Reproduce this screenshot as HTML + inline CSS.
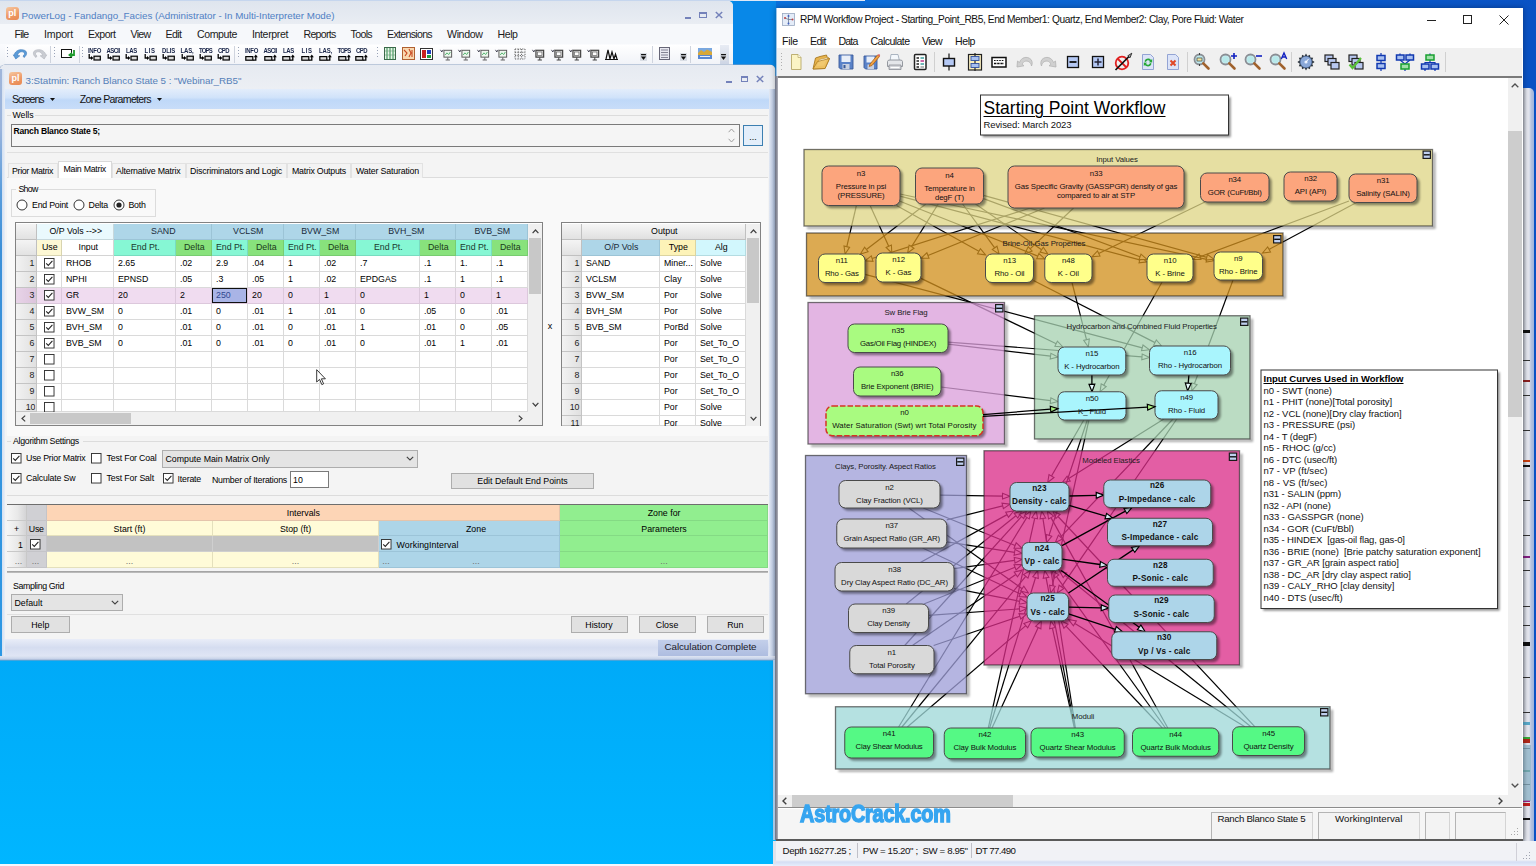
<!DOCTYPE html><html><head><meta charset="utf-8"><title>PowerLog</title><style>
html,body{margin:0;padding:0}
body{width:1536px;height:866px;overflow:hidden;position:relative;font-family:"Liberation Sans",sans-serif;font-size:8.8px;color:#000;
 background:#0a7be0;}
div,span,svg{position:absolute;}
span{white-space:pre;display:block}
svg{overflow:visible}
.abs{position:absolute}
</style></head><body><div style="left:0px;top:0px;width:1536px;height:866px;background:linear-gradient(90deg,#00aef8 0%,#00aaf4 40%,#0690ea 49%,#0a6cd4 60%,#0a58c8 100%);"></div><div style="left:0px;top:655px;width:776px;height:211px;background:linear-gradient(180deg,#00aaf8,#00b6ff);"></div><div style="left:733px;top:0px;width:43px;height:65px;background:#0888e8;"></div><div style="left:1523px;top:0px;width:13px;height:866px;background:#0a52c4;"></div><div style="left:776px;top:0px;width:760px;height:8px;background:linear-gradient(90deg,#0a70dc,#0a52c4);"></div><div style="left:1522px;top:87.5px;width:12px;height:753px;background:linear-gradient(90deg,#8a8e98 0,#c8ccd6 3px,#e4e6ee 5px,#e4e6ee 7px,#b8c4de 9px,#9fb4dc 12px);border-radius:0 5px 0 0;"></div><div style="left:1522px;top:330px;width:8px;height:3px;background:#111;"></div><div style="left:1522px;top:360px;width:8px;height:1px;background:#333;"></div><div style="left:1522px;top:380px;width:8px;height:1.5px;background:#8a2020;"></div><div style="left:1522px;top:395px;width:8px;height:1px;background:#333;"></div><div style="left:1522px;top:430px;width:8px;height:1px;background:#333;"></div><div style="left:1522px;top:460px;width:8px;height:2px;background:#c84010;"></div><div style="left:1522px;top:465px;width:8px;height:1.5px;background:#111;"></div><div style="left:1522px;top:500px;width:8px;height:1px;background:#333;"></div><div style="left:1522px;top:535px;width:8px;height:1px;background:#333;"></div><div style="left:1522px;top:556px;width:8px;height:1.5px;background:#802080;"></div><div style="left:1522px;top:570px;width:8px;height:1px;background:#333;"></div><div style="left:1522px;top:606px;width:8px;height:1px;background:#333;"></div><div style="left:1522px;top:625px;width:8px;height:1px;background:#333;"></div><div style="left:1522px;top:642px;width:8px;height:4px;background:#111;"></div><div style="left:1522px;top:677px;width:8px;height:1px;background:#333;"></div><div style="left:1522px;top:712px;width:8px;height:1px;background:#333;"></div><div style="left:1522px;top:722px;width:8px;height:3px;background:#58a8c8;"></div><div style="left:1522px;top:737px;width:8px;height:1.5px;background:#38a838;"></div><div style="left:1522px;top:739px;width:8px;height:4px;background:#b02818;"></div><div style="left:1522px;top:748px;width:8px;height:1px;background:#333;"></div><div style="left:1522px;top:770px;width:8px;height:1.5px;background:#208060;"></div><div style="left:1522px;top:784px;width:8px;height:1px;background:#333;"></div><div style="left:1522px;top:800px;width:8px;height:2px;background:#a02080;"></div><div style="left:1522px;top:803px;width:8px;height:3px;background:#c02020;"></div><div style="left:1522px;top:818px;width:8px;height:1.5px;background:#111;"></div><div style="left:1523px;top:745px;width:8px;height:56px;background:#8cb4c8;opacity:0.75"></div><div style="left:0px;top:863.7px;width:773px;height:2.3px;background:#f4f7fc;"></div><div style="left:0px;top:60px;width:733px;height:12px;background:#e8ecf3;"></div><div style="left:0px;top:0px;width:672px;height:1px;background:#c8ccd6;"></div><div style="left:708px;top:0px;width:157px;height:1px;background:#dfe8f6;"></div><div style="left:0;top:0;width:733px;height:1px;background:#c6d6ee"></div><div id="pl" class="abs" style="left:0;top:1px;width:733px;height:64px;background:#f4f6fa;border-radius:0 5px 0 0;overflow:hidden"><div style="left:0px;top:0px;width:733px;height:23px;background:linear-gradient(#dfe5ee,#e9edf3);"></div><div style="left:6px;top:6px;width:12.5px;height:12.5px;border-radius:3px;background:linear-gradient(160deg,#f6c8a0 0%,#ee9a68 55%,#e88850 100%);"></div><span style="left:8.3px;top:5.8px;font-size:9px;line-height:12px;color:#fff;font-weight:bold;">pl</span><span style="left:21.5px;top:7.5px;font-size:9.8px;line-height:13px;letter-spacing:-0.018px;color:#4f7fc4;">PowerLog - Fandango_Facies (Administrator - In Multi-Interpreter Mode)</span><div style="left:684.5px;top:16.0px;width:6px;height:1.6px;background:#7482ba;"></div><div style="left:699.0px;top:10.5px;width:7.5px;height:6.5px;border:1px solid #7482ba;border-top:2.2px solid #7482ba;box-sizing:border-box;"></div><svg style="left:713.5px;top:8.5px" width="10" height="10" viewBox="0 0 10 10"><path d="M1.8 2 L8.2 8 M8.2 2 L1.8 8" stroke="#7482ba" stroke-width="1.5" fill="none"/></svg><div style="left:0px;top:23px;width:733px;height:20px;background:#f6f8fb;"></div><span style="left:14.5px;top:26.3px;font-size:10.6px;line-height:14px;letter-spacing:-0.770px;color:#1a1a1a;">File</span><span style="left:44.0px;top:26.3px;font-size:10.6px;line-height:14px;letter-spacing:-0.174px;color:#1a1a1a;">Import</span><span style="left:88.0px;top:26.3px;font-size:10.6px;line-height:14px;letter-spacing:-0.523px;color:#1a1a1a;">Export</span><span style="left:130.5px;top:26.3px;font-size:10.6px;line-height:14px;letter-spacing:-0.696px;color:#1a1a1a;">View</span><span style="left:165.5px;top:26.3px;font-size:10.6px;line-height:14px;letter-spacing:-0.566px;color:#1a1a1a;">Edit</span><span style="left:197.0px;top:26.3px;font-size:10.6px;line-height:14px;letter-spacing:-0.430px;color:#1a1a1a;">Compute</span><span style="left:252.0px;top:26.3px;font-size:10.6px;line-height:14px;letter-spacing:-0.386px;color:#1a1a1a;">Interpret</span><span style="left:303.5px;top:26.3px;font-size:10.6px;line-height:14px;letter-spacing:-0.731px;color:#1a1a1a;">Reports</span><span style="left:350.5px;top:26.3px;font-size:10.6px;line-height:14px;letter-spacing:-0.649px;color:#1a1a1a;">Tools</span><span style="left:387.0px;top:26.3px;font-size:10.6px;line-height:14px;letter-spacing:-0.685px;color:#1a1a1a;">Extensions</span><span style="left:447.0px;top:26.3px;font-size:10.6px;line-height:14px;letter-spacing:-0.367px;color:#1a1a1a;">Window</span><span style="left:497.5px;top:26.3px;font-size:10.6px;line-height:14px;letter-spacing:-0.450px;color:#1a1a1a;">Help</span><div style="left:0px;top:43px;width:733px;height:21px;background:linear-gradient(#fbfcfe,#eef1f6);"></div><div style="left:5px;top:44px;width:724px;height:19px;background:linear-gradient(#ffffff,#f1f3f8);border-radius:3px;"></div><div style="left:720px;top:44px;width:9px;height:19px;background:linear-gradient(#e8ecf4,#cdd5e4);"></div><div style="left:7px;top:46px;width:1.2px;height:1.2px;background:#9aa4b8;"></div><div style="left:7px;top:49px;width:1.2px;height:1.2px;background:#9aa4b8;"></div><div style="left:7px;top:52px;width:1.2px;height:1.2px;background:#9aa4b8;"></div><div style="left:7px;top:55px;width:1.2px;height:1.2px;background:#9aa4b8;"></div><svg style="left:13px;top:46px" width="15" height="13" viewBox="0 0 15 13"><path d="M1 8.5 C2 3 8 1.5 12 3.5 C14.5 5 14 8.5 11 10.5 L10 9 C12 7.5 12 6 10.5 5.2 C8 4 5 5.5 4.5 8.5 L6.8 8.8 L2.8 12 L0.2 7.8Z" fill="#5b9bd8" stroke="#3a78b8" stroke-width="0.6"/></svg><svg style="left:32px;top:46px" width="15" height="13" viewBox="0 0 15 13"><path d="M14 8.5 C13 3 7 1.5 3 3.5 C0.5 5 1 8.5 4 10.5 L5 9 C3 7.5 3 6 4.5 5.2 C7 4 10 5.5 10.5 8.5 L8.2 8.8 L12.2 12 L14.8 7.8Z" fill="#c9ccd2" stroke="#b0b4bc" stroke-width="0.6"/></svg><div style="left:53.5px;top:46px;width:1.2px;height:1.2px;background:#9aa4b8;"></div><div style="left:53.5px;top:49px;width:1.2px;height:1.2px;background:#9aa4b8;"></div><div style="left:53.5px;top:52px;width:1.2px;height:1.2px;background:#9aa4b8;"></div><div style="left:53.5px;top:55px;width:1.2px;height:1.2px;background:#9aa4b8;"></div><div style="left:60.5px;top:47.5px;width:11.5px;height:9px;border:1.6px solid #111;box-sizing:border-box;background:#fff"></div><svg style="left:68px;top:49px" width="8" height="8" viewBox="0 0 8 8"><path d="M6 0 V5 H2.5 M4 3 L1.5 5 L4 7" fill="none" stroke="#1c9a2c" stroke-width="1.8"/></svg><div style="left:50px;top:45px;width:1px;height:17px;background:#cfd4de;"></div><div style="left:78.5px;top:45px;width:1px;height:17px;background:#cfd4de;"></div><div style="left:82px;top:46px;width:1.2px;height:1.2px;background:#9aa4b8;"></div><div style="left:82px;top:49px;width:1.2px;height:1.2px;background:#9aa4b8;"></div><div style="left:82px;top:52px;width:1.2px;height:1.2px;background:#9aa4b8;"></div><div style="left:82px;top:55px;width:1.2px;height:1.2px;background:#9aa4b8;"></div><span style="left:88.0px;top:45.6px;font-size:6px;line-height:8px;letter-spacing:-0.333px;color:#182448;font-weight:bold;transform:scaleY(1.15);">INFO</span><svg style="left:88.0px;top:53.0px" width="13" height="8" viewBox="0 0 13 8"><path d="M1.2 0 V4 H4" fill="none" stroke="#000" stroke-width="1.3"/><path d="M3 2 L5.4 4 L3 6Z" fill="#000"/><rect x="6" y="2.2" width="6.3" height="3.8" fill="#d8d8d8" stroke="#000" stroke-width="1.2"/></svg><span style="left:106.5px;top:45.6px;font-size:6px;line-height:8px;letter-spacing:-0.600px;color:#182448;font-weight:bold;transform:scaleY(1.15);">ASCII</span><svg style="left:106.5px;top:53.0px" width="13" height="8" viewBox="0 0 13 8"><path d="M1.2 0 V4 H4" fill="none" stroke="#000" stroke-width="1.3"/><path d="M3 2 L5.4 4 L3 6Z" fill="#000"/><rect x="6" y="2.2" width="6.3" height="3.8" fill="#d8d8d8" stroke="#000" stroke-width="1.2"/></svg><span style="left:126.1px;top:45.6px;font-size:6px;line-height:8px;letter-spacing:-0.400px;color:#182448;font-weight:bold;transform:scaleY(1.15);">LAS</span><svg style="left:125.0px;top:53.0px" width="13" height="8" viewBox="0 0 13 8"><path d="M1.2 0 V4 H4" fill="none" stroke="#000" stroke-width="1.3"/><path d="M3 2 L5.4 4 L3 6Z" fill="#000"/><rect x="6" y="2.2" width="6.3" height="3.8" fill="#d8d8d8" stroke="#000" stroke-width="1.2"/></svg><span style="left:144.6px;top:45.6px;font-size:6px;line-height:8px;letter-spacing:0.489px;color:#182448;font-weight:bold;transform:scaleY(1.15);">LIS</span><svg style="left:143.5px;top:53.0px" width="13" height="8" viewBox="0 0 13 8"><path d="M1.2 0 V4 H4" fill="none" stroke="#000" stroke-width="1.3"/><path d="M3 2 L5.4 4 L3 6Z" fill="#000"/><rect x="6" y="2.2" width="6.3" height="3.8" fill="#d8d8d8" stroke="#000" stroke-width="1.2"/></svg><span style="left:162.0px;top:45.6px;font-size:6px;line-height:8px;letter-spacing:-0.167px;color:#182448;font-weight:bold;transform:scaleY(1.15);">DLIS</span><svg style="left:162.0px;top:53.0px" width="13" height="8" viewBox="0 0 13 8"><path d="M1.2 0 V4 H4" fill="none" stroke="#000" stroke-width="1.3"/><path d="M3 2 L5.4 4 L3 6Z" fill="#000"/><rect x="6" y="2.2" width="6.3" height="3.8" fill="#d8d8d8" stroke="#000" stroke-width="1.2"/></svg><span style="left:180.5px;top:45.6px;font-size:6px;line-height:8px;letter-spacing:-0.167px;color:#182448;font-weight:bold;transform:scaleY(1.15);">LAS,</span><svg style="left:180.5px;top:53.0px" width="13" height="8" viewBox="0 0 13 8"><path d="M1.2 0 V4 H4" fill="none" stroke="#000" stroke-width="1.3"/><path d="M3 2 L5.4 4 L3 6Z" fill="#000"/><rect x="6" y="2.2" width="6.3" height="3.8" fill="#d8d8d8" stroke="#000" stroke-width="1.2"/></svg><span style="left:199.0px;top:45.6px;font-size:6px;line-height:8px;letter-spacing:-0.807px;color:#182448;font-weight:bold;transform:scaleY(1.15);">TOPS</span><svg style="left:199.0px;top:53.0px" width="13" height="8" viewBox="0 0 13 8"><path d="M1.2 0 V4 H4" fill="none" stroke="#000" stroke-width="1.3"/><path d="M3 2 L5.4 4 L3 6Z" fill="#000"/><rect x="6" y="2.2" width="6.3" height="3.8" fill="#d8d8d8" stroke="#000" stroke-width="1.2"/></svg><span style="left:218.1px;top:45.6px;font-size:6px;line-height:8px;letter-spacing:-0.623px;color:#182448;font-weight:bold;transform:scaleY(1.15);">CPD</span><svg style="left:217.0px;top:53.0px" width="13" height="8" viewBox="0 0 13 8"><path d="M1.2 0 V4 H4" fill="none" stroke="#000" stroke-width="1.3"/><path d="M3 2 L5.4 4 L3 6Z" fill="#000"/><rect x="6" y="2.2" width="6.3" height="3.8" fill="#d8d8d8" stroke="#000" stroke-width="1.2"/></svg><div style="left:234px;top:45px;width:1px;height:17px;background:#cfd4de;"></div><div style="left:238px;top:46px;width:1.2px;height:1.2px;background:#9aa4b8;"></div><div style="left:238px;top:49px;width:1.2px;height:1.2px;background:#9aa4b8;"></div><div style="left:238px;top:52px;width:1.2px;height:1.2px;background:#9aa4b8;"></div><div style="left:238px;top:55px;width:1.2px;height:1.2px;background:#9aa4b8;"></div><span style="left:245.0px;top:45.6px;font-size:6px;line-height:8px;letter-spacing:-0.333px;color:#182448;font-weight:bold;transform:scaleY(1.15);">INFO</span><svg style="left:245.0px;top:53.0px" width="13" height="8" viewBox="0 0 13 8"><rect x="0.8" y="2.6" width="7" height="3.6" fill="#d8d8d8" stroke="#000" stroke-width="1.2"/><path d="M8 6.2 H10.8 V2.5" fill="none" stroke="#000" stroke-width="1.3"/><path d="M8.8 3.2 L10.8 0.4 L12.8 3.2Z" fill="#000"/></svg><span style="left:263.5px;top:45.6px;font-size:6px;line-height:8px;letter-spacing:-0.600px;color:#182448;font-weight:bold;transform:scaleY(1.15);">ASCII</span><svg style="left:263.5px;top:53.0px" width="13" height="8" viewBox="0 0 13 8"><rect x="0.8" y="2.6" width="7" height="3.6" fill="#d8d8d8" stroke="#000" stroke-width="1.2"/><path d="M8 6.2 H10.8 V2.5" fill="none" stroke="#000" stroke-width="1.3"/><path d="M8.8 3.2 L10.8 0.4 L12.8 3.2Z" fill="#000"/></svg><span style="left:283.1px;top:45.6px;font-size:6px;line-height:8px;letter-spacing:-0.400px;color:#182448;font-weight:bold;transform:scaleY(1.15);">LAS</span><svg style="left:282.0px;top:53.0px" width="13" height="8" viewBox="0 0 13 8"><rect x="0.8" y="2.6" width="7" height="3.6" fill="#d8d8d8" stroke="#000" stroke-width="1.2"/><path d="M8 6.2 H10.8 V2.5" fill="none" stroke="#000" stroke-width="1.3"/><path d="M8.8 3.2 L10.8 0.4 L12.8 3.2Z" fill="#000"/></svg><span style="left:301.6px;top:45.6px;font-size:6px;line-height:8px;letter-spacing:0.489px;color:#182448;font-weight:bold;transform:scaleY(1.15);">LIS</span><svg style="left:300.5px;top:53.0px" width="13" height="8" viewBox="0 0 13 8"><rect x="0.8" y="2.6" width="7" height="3.6" fill="#d8d8d8" stroke="#000" stroke-width="1.2"/><path d="M8 6.2 H10.8 V2.5" fill="none" stroke="#000" stroke-width="1.3"/><path d="M8.8 3.2 L10.8 0.4 L12.8 3.2Z" fill="#000"/></svg><span style="left:319.0px;top:45.6px;font-size:6px;line-height:8px;letter-spacing:-0.167px;color:#182448;font-weight:bold;transform:scaleY(1.15);">LAS,</span><svg style="left:319.0px;top:53.0px" width="13" height="8" viewBox="0 0 13 8"><rect x="0.8" y="2.6" width="7" height="3.6" fill="#d8d8d8" stroke="#000" stroke-width="1.2"/><path d="M8 6.2 H10.8 V2.5" fill="none" stroke="#000" stroke-width="1.3"/><path d="M8.8 3.2 L10.8 0.4 L12.8 3.2Z" fill="#000"/></svg><span style="left:337.5px;top:45.6px;font-size:6px;line-height:8px;letter-spacing:-0.807px;color:#182448;font-weight:bold;transform:scaleY(1.15);">TOPS</span><svg style="left:337.5px;top:53.0px" width="13" height="8" viewBox="0 0 13 8"><rect x="0.8" y="2.6" width="7" height="3.6" fill="#d8d8d8" stroke="#000" stroke-width="1.2"/><path d="M8 6.2 H10.8 V2.5" fill="none" stroke="#000" stroke-width="1.3"/><path d="M8.8 3.2 L10.8 0.4 L12.8 3.2Z" fill="#000"/></svg><span style="left:356.1px;top:45.6px;font-size:6px;line-height:8px;letter-spacing:-0.623px;color:#182448;font-weight:bold;transform:scaleY(1.15);">CPD</span><svg style="left:355.0px;top:53.0px" width="13" height="8" viewBox="0 0 13 8"><rect x="0.8" y="2.6" width="7" height="3.6" fill="#d8d8d8" stroke="#000" stroke-width="1.2"/><path d="M8 6.2 H10.8 V2.5" fill="none" stroke="#000" stroke-width="1.3"/><path d="M8.8 3.2 L10.8 0.4 L12.8 3.2Z" fill="#000"/></svg><div style="left:376.5px;top:46px;width:1.2px;height:1.2px;background:#9aa4b8;"></div><div style="left:376.5px;top:49px;width:1.2px;height:1.2px;background:#9aa4b8;"></div><div style="left:376.5px;top:52px;width:1.2px;height:1.2px;background:#9aa4b8;"></div><div style="left:376.5px;top:55px;width:1.2px;height:1.2px;background:#9aa4b8;"></div><svg style="left:384px;top:46px" width="12" height="13" viewBox="0 0 12 13"><rect x="0.5" y="0.5" width="11" height="12" fill="#e8f4e8" stroke="#3a6a4a"/><path d="M3 1 V12 M6 1 V12 M9 1 V12" stroke="#2a8a4a" stroke-width="1"/><path d="M1 4 H11 M1 8 H11" stroke="#6a9a7a" stroke-width="0.6"/></svg><svg style="left:402px;top:46px" width="13" height="13" viewBox="0 0 13 13"><rect x="0.5" y="0.5" width="12" height="12" fill="#f8d8b0" stroke="#b06030"/><path d="M2 3 L5 6 L3 9 M7 2 L9 6 L7 10 M10 3 V10" stroke="#c84820" stroke-width="1.1" fill="none"/></svg><svg style="left:420px;top:47px" width="13" height="12" viewBox="0 0 13 12"><rect x="0.5" y="0.5" width="12" height="11" fill="#fff" stroke="#333"/><rect x="2" y="2" width="4" height="8" fill="#c82020"/><rect x="7" y="2" width="4" height="4" fill="#2040c0"/><rect x="7" y="7" width="4" height="3" fill="#20a040"/></svg><svg style="left:439.5px;top:47.5px" width="13" height="12" viewBox="0 0 15 14"><path d="M0.5 1 L2 3.5 L3.5 1" fill="none" stroke="#334" stroke-width="1"/><rect x="4.5" y="1.5" width="9" height="8" fill="#eef6ee" stroke="#555" stroke-width="1.1"/><path d="M6 7 L8 4.5 L10 6.5 L12 3.5" stroke="#3aaa5a" stroke-width="1" fill="none"/><path d="M9 10 V12.5 M6.5 12.8 H11.5" stroke="#555" stroke-width="1.1"/></svg><svg style="left:458.0px;top:47.5px" width="13" height="12" viewBox="0 0 15 14"><path d="M0.5 1 L2 3.5 L3.5 1" fill="none" stroke="#334" stroke-width="1"/><rect x="4.5" y="1.5" width="9" height="8" fill="#eef6ee" stroke="#555" stroke-width="1.1"/><path d="M6 7 L8 4.5 L10 6.5 L12 3.5" stroke="#3aaa5a" stroke-width="1" fill="none"/><path d="M9 10 V12.5 M6.5 12.8 H11.5" stroke="#555" stroke-width="1.1"/></svg><svg style="left:476.5px;top:47.5px" width="13" height="12" viewBox="0 0 15 14"><path d="M0.5 1 L2 3.5 L3.5 1" fill="none" stroke="#334" stroke-width="1"/><rect x="4.5" y="1.5" width="9" height="8" fill="#eef6ee" stroke="#555" stroke-width="1.1"/><path d="M6 7 L8 4.5 L10 6.5 L12 3.5" stroke="#3aaa5a" stroke-width="1" fill="none"/><path d="M9 10 V12.5 M6.5 12.8 H11.5" stroke="#555" stroke-width="1.1"/></svg><svg style="left:495.0px;top:47.5px" width="13" height="12" viewBox="0 0 15 14"><path d="M0.5 1 L2 3.5 L3.5 1" fill="none" stroke="#334" stroke-width="1"/><rect x="4.5" y="1.5" width="9" height="8" fill="#eef6ee" stroke="#555" stroke-width="1.1"/><path d="M6 7 L8 4.5 L10 6.5 L12 3.5" stroke="#3aaa5a" stroke-width="1" fill="none"/><path d="M9 10 V12.5 M6.5 12.8 H11.5" stroke="#555" stroke-width="1.1"/></svg><svg style="left:514px;top:47px" width="12" height="12" viewBox="0 0 12 12"><path d="M1 1 H11 M1 4.3 H11 M1 7.6 H11 M1 11 H11 M1 1 V11 M4.3 1 V11 M7.6 1 V11 M11 1 V11" stroke="#555" stroke-width="0.9" stroke-dasharray="1.2 1.2"/></svg><svg style="left:532.0px;top:47.5px" width="13" height="12" viewBox="0 0 15 14"><path d="M0.5 1 L2 3.5 L3.5 1" fill="none" stroke="#334" stroke-width="1"/><rect x="4.5" y="1.5" width="9" height="8" fill="#dcdcdc" stroke="#444" stroke-width="1.4"/><rect x="6.5" y="3.5" width="5" height="4" fill="#fff" stroke="#666" stroke-width="0.8"/><path d="M9 10 V12.5 M6.5 12.8 H11.5" stroke="#444" stroke-width="1.2"/></svg><svg style="left:550.5px;top:47.5px" width="13" height="12" viewBox="0 0 15 14"><path d="M0.5 1 L2 3.5 L3.5 1" fill="none" stroke="#334" stroke-width="1"/><rect x="4.5" y="1.5" width="9" height="8" fill="#dcdcdc" stroke="#444" stroke-width="1.4"/><rect x="6.5" y="3.5" width="5" height="4" fill="#fff" stroke="#666" stroke-width="0.8"/><path d="M9 10 V12.5 M6.5 12.8 H11.5" stroke="#444" stroke-width="1.2"/></svg><svg style="left:569.0px;top:47.5px" width="13" height="12" viewBox="0 0 15 14"><path d="M0.5 1 L2 3.5 L3.5 1" fill="none" stroke="#334" stroke-width="1"/><rect x="4.5" y="1.5" width="9" height="8" fill="#dcdcdc" stroke="#444" stroke-width="1.4"/><rect x="6.5" y="3.5" width="5" height="4" fill="#fff" stroke="#666" stroke-width="0.8"/><path d="M9 10 V12.5 M6.5 12.8 H11.5" stroke="#444" stroke-width="1.2"/></svg><svg style="left:587.0px;top:47.5px" width="13" height="12" viewBox="0 0 15 14"><path d="M0.5 1 L2 3.5 L3.5 1" fill="none" stroke="#334" stroke-width="1"/><rect x="4.5" y="1.5" width="9" height="8" fill="#dcdcdc" stroke="#444" stroke-width="1.4"/><rect x="6.5" y="3.5" width="5" height="4" fill="#fff" stroke="#666" stroke-width="0.8"/><path d="M9 10 V12.5 M6.5 12.8 H11.5" stroke="#444" stroke-width="1.2"/></svg><svg style="left:605px;top:47px" width="13" height="12" viewBox="0 0 13 12"><path d="M1 11 L3 2 L5 11 M5 11 L7 4 L9 11 M9 11 L10.5 6 L12 11" stroke="#111" stroke-width="1.2" fill="none"/><path d="M0 11.5 H13" stroke="#111" stroke-width="1"/></svg><svg style="left:640px;top:52px" width="7" height="8" viewBox="0 0 8 9"><rect x="0" y="0" width="8" height="9" fill="#d8dce4"/><path d="M1.2 1.8 H6.8" stroke="#111" stroke-width="1.2"/><path d="M1 4 H7 L4 7.8Z" fill="#111"/></svg><div style="left:652px;top:45px;width:1px;height:17px;background:#cfd4de;"></div><svg style="left:659px;top:46px" width="11" height="13" viewBox="0 0 11 13"><rect x="0.5" y="0.5" width="10" height="12" fill="#e8e8f0" stroke="#667"/><path d="M2 3 H9 M2 5.5 H9 M2 8 H9 M2 10.5 H9" stroke="#778" stroke-width="0.9"/></svg><svg style="left:679.5px;top:52px" width="7" height="8" viewBox="0 0 8 9"><rect x="0" y="0" width="8" height="9" fill="#d8dce4"/><path d="M1.2 1.8 H6.8" stroke="#111" stroke-width="1.2"/><path d="M1 4 H7 L4 7.8Z" fill="#111"/></svg><div style="left:690px;top:45px;width:1px;height:17px;background:#cfd4de;"></div><svg style="left:698px;top:47px" width="14" height="11" viewBox="0 0 14 11"><rect x="0" y="0" width="14" height="11" fill="#7aa8e0"/><path d="M0 5 L3 2 L6 4 L9 1.5 L14 4 V7 H0Z" fill="#d8a838"/><path d="M0 7 H14 V11 H0Z" fill="#5a88d0"/><path d="M2 8.5 H12" stroke="#e8eef8" stroke-width="1"/></svg><svg style="left:719.5px;top:52px" width="7" height="8" viewBox="0 0 8 9"><rect x="0" y="0" width="8" height="9" fill="#d8dce4"/><path d="M1.2 1.8 H6.8" stroke="#111" stroke-width="1.2"/><path d="M1 4 H7 L4 7.8Z" fill="#111"/></svg></div><div style="left:0px;top:65px;width:775px;height:595px;background:#f4f4f4;border-radius:5px 5px 0 0;box-shadow:0 0 0 0.5px #8aa0c0;"></div><div style="left:0px;top:65px;width:775px;height:24px;background:linear-gradient(#e6eaf1,#eceff4);border-radius:5px 5px 0 0;"></div><div style="left:0px;top:69px;width:5px;height:590px;background:linear-gradient(90deg,#a9c0e0,#d6e2f2 50%,#e8eef8);"></div><div style="left:0px;top:69px;width:1.6px;height:591px;background:linear-gradient(180deg,#a0b6da 0,#9ab4dc 60px,#5c9edc 120px,#3c90d8 180px,#2c98e4 100%);"></div><div style="left:769px;top:89px;width:6px;height:570px;background:linear-gradient(90deg,#e4eaf4,#c6d2e8 55%,#a4b4d0);"></div><div style="left:9px;top:72px;width:13px;height:13px;border-radius:3px;background:linear-gradient(160deg,#f6c8a0 0%,#ee9a68 55%,#e88850 100%);"></div><span style="left:11.5px;top:72.0px;font-size:9px;line-height:12px;color:#fff;font-weight:bold;">pl</span><span style="left:25.5px;top:74.4px;font-size:9.8px;line-height:13px;letter-spacing:-0.034px;color:#5580b8;">3:Statmin: Ranch Blanco State 5 : "Webinar_RB5"</span><div style="left:726px;top:81.0px;width:6px;height:1.6px;background:#7482ba;"></div><div style="left:740.5px;top:75.5px;width:7.5px;height:6.5px;border:1px solid #7482ba;border-top:2.2px solid #7482ba;box-sizing:border-box;"></div><svg style="left:754.5px;top:73.5px" width="10" height="10" viewBox="0 0 10 10"><path d="M1.8 2 L8.2 8 M8.2 2 L1.8 8" stroke="#7482ba" stroke-width="1.5" fill="none"/></svg><div style="left:5px;top:89px;width:764px;height:20px;background:linear-gradient(#e3edfb 0%,#d1e3fa 42%,#bfd8f8 55%,#c8ddf9 100%);"></div><span style="left:12.0px;top:92.2px;font-size:10.6px;line-height:14px;letter-spacing:-1.055px;color:#111;">Screens</span><svg style="left:49.5px;top:97.5px" width="5" height="3" viewBox="0 0 5 3"><path d="M0 0 H5 L2.5 3Z" fill="#111"/></svg><span style="left:79.7px;top:92.2px;font-size:10.6px;line-height:14px;letter-spacing:-0.706px;color:#111;">Zone Parameters</span><svg style="left:157px;top:97.5px" width="5" height="3" viewBox="0 0 5 3"><path d="M0 0 H5 L2.5 3Z" fill="#111"/></svg><div style="left:5px;top:109px;width:764px;height:530px;background:#f4f4f4;"></div><div style="left:7px;top:115px;width:761px;height:1px;background:#dcdcdc;"></div><div style="left:11px;top:109px;width:24px;height:12px;background:#f4f4f4;"></div><span style="left:12.5px;top:110.4px;font-size:8.8px;line-height:11px;letter-spacing:-0.070px;">Wells</span><div style="left:11px;top:123.5px;width:729px;height:23px;background:#f5f5f5;border:1px solid #7a7a7a;box-sizing:border-box;"></div><span style="left:13.5px;top:125.9px;font-size:8.6px;line-height:11px;letter-spacing:-0.205px;font-weight:bold;">Ranch Blanco State 5;</span><svg style="left:728px;top:128px" width="7" height="5" viewBox="0 0 7 5"><path d="M0.6 4.2 L3.5 1 L6.4 4.2" fill="none" stroke="#a0a0a0" stroke-width="1"/></svg><svg style="left:728px;top:138px" width="7" height="5" viewBox="0 0 7 5"><path d="M0.6 0.8 L3.5 4 L6.4 0.8" fill="none" stroke="#a0a0a0" stroke-width="1"/></svg><div style="left:743px;top:124.5px;width:20px;height:21px;background:#e3eefa;border:1px solid #3c7fb1;box-sizing:border-box;"></div><span style="left:749.3px;top:132.4px;font-size:8.8px;line-height:11px;">...</span><div style="left:7px;top:152px;width:761px;height:1px;background:#e0e0e0;"></div><div style="left:7px;top:177px;width:761px;height:258px;background:#f9f9f9;border-top:1px solid #dcdcdc;"></div><div style="left:8px;top:163px;width:50px;height:14.5px;background:#f3f3f3;border:1px solid #e2e2e2;border-bottom:none;box-sizing:border-box;"></div><span style="left:12.0px;top:165.7px;font-size:8.8px;line-height:11px;letter-spacing:-0.332px;">Prior Matrix</span><div style="left:111.5px;top:163px;width:74.0px;height:14.5px;background:#f3f3f3;border:1px solid #e2e2e2;border-bottom:none;box-sizing:border-box;"></div><span style="left:116.0px;top:165.7px;font-size:8.8px;line-height:11px;letter-spacing:-0.193px;">Alternative Matrix</span><div style="left:185.5px;top:163px;width:101.5px;height:14.5px;background:#f3f3f3;border:1px solid #e2e2e2;border-bottom:none;box-sizing:border-box;"></div><span style="left:190.0px;top:165.7px;font-size:8.8px;line-height:11px;letter-spacing:-0.181px;">Discriminators and Logic</span><div style="left:287px;top:163px;width:64px;height:14.5px;background:#f3f3f3;border:1px solid #e2e2e2;border-bottom:none;box-sizing:border-box;"></div><span style="left:292.0px;top:165.7px;font-size:8.8px;line-height:11px;letter-spacing:-0.230px;">Matrix Outputs</span><div style="left:351px;top:163px;width:72px;height:14.5px;background:#f3f3f3;border:1px solid #e2e2e2;border-bottom:none;box-sizing:border-box;"></div><span style="left:356.0px;top:165.7px;font-size:8.8px;line-height:11px;letter-spacing:-0.169px;">Water Saturation</span><div style="left:58px;top:161px;width:53.5px;height:17px;background:#ffffff;border:1px solid #d9d9d9;border-bottom:none;box-sizing:border-box;"></div><span style="left:63.5px;top:163.9px;font-size:8.8px;line-height:11px;letter-spacing:-0.270px;">Main Matrix</span><div style="left:11px;top:189px;width:145px;height:28px;border:1px solid #dcdcdc;box-sizing:border-box;"></div><div style="left:16px;top:184px;width:22px;height:10px;background:#f9f9f9;"></div><span style="left:18.5px;top:183.9px;font-size:8.8px;line-height:11px;letter-spacing:-0.753px;">Show</span><svg style="left:15.5px;top:198.5px" width="12" height="12" viewBox="0 0 12 12"><circle cx="6" cy="6" r="5" fill="#fff" stroke="#333" stroke-width="1"/></svg><span style="left:32.0px;top:199.9px;font-size:8.8px;line-height:11px;letter-spacing:-0.240px;">End Point</span><svg style="left:73px;top:198.5px" width="12" height="12" viewBox="0 0 12 12"><circle cx="6" cy="6" r="5" fill="#fff" stroke="#333" stroke-width="1"/></svg><span style="left:88.5px;top:199.9px;font-size:8.8px;line-height:11px;letter-spacing:-0.209px;">Delta</span><svg style="left:112.5px;top:198.5px" width="12" height="12" viewBox="0 0 12 12"><circle cx="6" cy="6" r="5" fill="#fff" stroke="#333" stroke-width="1"/><circle cx="6" cy="6" r="2.6" fill="#222"/></svg><span style="left:128.5px;top:199.9px;font-size:8.8px;line-height:11px;letter-spacing:-0.276px;">Both</span><div style="left:1px;top:0;width:0;height:0"><div style="left:14px;top:222px;width:528px;height:204px;background:#fff;border:1px solid #828282;box-sizing:border-box;"></div><div style="left:15px;top:223.5px;width:21px;height:16px;background:linear-gradient(#f4f4f4,#e2e2e2);border-right:1px solid #c0c0c0;border-bottom:1px solid #c0c0c0;box-sizing:border-box;"></div><div style="left:36px;top:223.5px;width:77px;height:16px;background:#eaf9fd;border-right:1px solid #c8d8dc;border-bottom:1px solid #c8d8dc;box-sizing:border-box;"></div><span style="left:48.5px;top:226.4px;font-size:8.8px;line-height:11px;">O/P Vols --&gt;&gt;</span><div style="left:113px;top:223.5px;width:98px;height:16px;background:#aed6e8;border-right:1px solid #9cc4d6;border-bottom:1px solid #9cc4d6;box-sizing:border-box;"></div><span style="left:150.1px;top:226.4px;font-size:8.8px;line-height:11px;color:#1a2a3a;">SAND</span><div style="left:211px;top:223.5px;width:72px;height:16px;background:#aed6e8;border-right:1px solid #9cc4d6;border-bottom:1px solid #9cc4d6;box-sizing:border-box;"></div><span style="left:232.1px;top:226.4px;font-size:8.8px;line-height:11px;color:#1a2a3a;">VCLSM</span><div style="left:283px;top:223.5px;width:72px;height:16px;background:#aed6e8;border-right:1px solid #9cc4d6;border-bottom:1px solid #9cc4d6;box-sizing:border-box;"></div><span style="left:300.2px;top:226.4px;font-size:8.8px;line-height:11px;color:#1a2a3a;">BVW_SM</span><div style="left:355px;top:223.5px;width:100px;height:16px;background:#aed6e8;border-right:1px solid #9cc4d6;border-bottom:1px solid #9cc4d6;box-sizing:border-box;"></div><span style="left:387.2px;top:226.4px;font-size:8.8px;line-height:11px;color:#1a2a3a;">BVH_SM</span><div style="left:455px;top:223.5px;width:72px;height:16px;background:#aed6e8;border-right:1px solid #9cc4d6;border-bottom:1px solid #9cc4d6;box-sizing:border-box;"></div><span style="left:473.4px;top:226.4px;font-size:8.8px;line-height:11px;color:#1a2a3a;">BVB_SM</span><div style="left:15px;top:239.5px;width:21px;height:16px;background:linear-gradient(#f4f4f4,#e2e2e2);border-right:1px solid #c0c0c0;border-bottom:1px solid #c0c0c0;box-sizing:border-box;"></div><div style="left:36px;top:239.5px;width:25px;height:16px;background:#fdf8d4;border-right:1px solid #d8d4b0;border-bottom:1px solid #d8d4b0;box-sizing:border-box;"></div><span style="left:41.0px;top:242.4px;font-size:8.8px;line-height:11px;">Use</span><div style="left:61px;top:239.5px;width:52px;height:16px;background:#ffffff;border-right:1px solid #d4d4d4;border-bottom:1px solid #d4d4d4;box-sizing:border-box;"></div><span style="left:77.5px;top:242.4px;font-size:8.8px;line-height:11px;">Input</span><div style="left:113px;top:239.5px;width:62px;height:16px;background:#86f7d4;border-right:1px solid #78dcc0;border-bottom:1px solid #78dcc0;box-sizing:border-box;"></div><span style="left:129.9px;top:242.4px;font-size:8.8px;line-height:11px;color:#1a3a30;">End Pt.</span><div style="left:175px;top:239.5px;width:36px;height:16px;background:#88e27c;border-right:1px solid #78cc70;border-bottom:1px solid #78cc70;box-sizing:border-box;"></div><span style="left:183.0px;top:242.4px;font-size:8.8px;line-height:11px;color:#1a3a1a;">Delta</span><div style="left:211px;top:239.5px;width:36px;height:16px;background:#86f7d4;border-right:1px solid #78dcc0;border-bottom:1px solid #78dcc0;box-sizing:border-box;"></div><span style="left:214.9px;top:242.4px;font-size:8.8px;line-height:11px;color:#1a3a30;">End Pt.</span><div style="left:247px;top:239.5px;width:36px;height:16px;background:#88e27c;border-right:1px solid #78cc70;border-bottom:1px solid #78cc70;box-sizing:border-box;"></div><span style="left:255.0px;top:242.4px;font-size:8.8px;line-height:11px;color:#1a3a1a;">Delta</span><div style="left:283px;top:239.5px;width:36px;height:16px;background:#86f7d4;border-right:1px solid #78dcc0;border-bottom:1px solid #78dcc0;box-sizing:border-box;"></div><span style="left:286.9px;top:242.4px;font-size:8.8px;line-height:11px;color:#1a3a30;">End Pt.</span><div style="left:319px;top:239.5px;width:36px;height:16px;background:#88e27c;border-right:1px solid #78cc70;border-bottom:1px solid #78cc70;box-sizing:border-box;"></div><span style="left:327.0px;top:242.4px;font-size:8.8px;line-height:11px;color:#1a3a1a;">Delta</span><div style="left:355px;top:239.5px;width:64px;height:16px;background:#86f7d4;border-right:1px solid #78dcc0;border-bottom:1px solid #78dcc0;box-sizing:border-box;"></div><span style="left:372.9px;top:242.4px;font-size:8.8px;line-height:11px;color:#1a3a30;">End Pt.</span><div style="left:419px;top:239.5px;width:36px;height:16px;background:#88e27c;border-right:1px solid #78cc70;border-bottom:1px solid #78cc70;box-sizing:border-box;"></div><span style="left:427.0px;top:242.4px;font-size:8.8px;line-height:11px;color:#1a3a1a;">Delta</span><div style="left:455px;top:239.5px;width:36px;height:16px;background:#86f7d4;border-right:1px solid #78dcc0;border-bottom:1px solid #78dcc0;box-sizing:border-box;"></div><span style="left:458.9px;top:242.4px;font-size:8.8px;line-height:11px;color:#1a3a30;">End Pt.</span><div style="left:491px;top:239.5px;width:36px;height:16px;background:#88e27c;border-right:1px solid #78cc70;border-bottom:1px solid #78cc70;box-sizing:border-box;"></div><span style="left:499.0px;top:242.4px;font-size:8.8px;line-height:11px;color:#1a3a1a;">Delta</span><div style="left:15px;top:255.5px;width:21px;height:16px;background:linear-gradient(90deg,#f2f2f2,#e0e0e0);border-right:1px solid #c4c4c4;border-bottom:1px solid #c4c4c4;box-sizing:border-box;"></div><span style="left:28.6px;top:258.4px;font-size:8.8px;line-height:11px;color:#222;">1</span><div style="left:36px;top:255.5px;width:25px;height:16px;background:#fff;border-right:1px solid #dadada;border-bottom:1px solid #dadada;box-sizing:border-box;"></div><svg style="left:43px;top:258.0px" width="10.5" height="10.5" viewBox="0 0 11 11"><rect x="0.5" y="0.5" width="10" height="10" fill="#fff" stroke="#333" stroke-width="1"/><path d="M2.3 5.6 L4.5 7.8 L8.8 3.0" fill="none" stroke="#222" stroke-width="1.1"/></svg><div style="left:61px;top:255.5px;width:52px;height:16px;background:#fff;border-right:1px solid #dadada;border-bottom:1px solid #dadada;box-sizing:border-box;"></div><span style="left:65.0px;top:258.4px;font-size:8.8px;line-height:11px;">RHOB</span><div style="left:113px;top:255.5px;width:62px;height:16px;background:#fff;border-right:1px solid #dadada;border-bottom:1px solid #dadada;box-sizing:border-box;"></div><span style="left:117.0px;top:258.4px;font-size:8.8px;line-height:11px;">2.65</span><div style="left:175px;top:255.5px;width:36px;height:16px;background:#fff;border-right:1px solid #dadada;border-bottom:1px solid #dadada;box-sizing:border-box;"></div><span style="left:179.0px;top:258.4px;font-size:8.8px;line-height:11px;">.02</span><div style="left:211px;top:255.5px;width:36px;height:16px;background:#fff;border-right:1px solid #dadada;border-bottom:1px solid #dadada;box-sizing:border-box;"></div><span style="left:215.0px;top:258.4px;font-size:8.8px;line-height:11px;">2.9</span><div style="left:247px;top:255.5px;width:36px;height:16px;background:#fff;border-right:1px solid #dadada;border-bottom:1px solid #dadada;box-sizing:border-box;"></div><span style="left:251.0px;top:258.4px;font-size:8.8px;line-height:11px;">.04</span><div style="left:283px;top:255.5px;width:36px;height:16px;background:#fff;border-right:1px solid #dadada;border-bottom:1px solid #dadada;box-sizing:border-box;"></div><span style="left:287.0px;top:258.4px;font-size:8.8px;line-height:11px;">1</span><div style="left:319px;top:255.5px;width:36px;height:16px;background:#fff;border-right:1px solid #dadada;border-bottom:1px solid #dadada;box-sizing:border-box;"></div><span style="left:323.0px;top:258.4px;font-size:8.8px;line-height:11px;">.02</span><div style="left:355px;top:255.5px;width:64px;height:16px;background:#fff;border-right:1px solid #dadada;border-bottom:1px solid #dadada;box-sizing:border-box;"></div><span style="left:359.0px;top:258.4px;font-size:8.8px;line-height:11px;">.7</span><div style="left:419px;top:255.5px;width:36px;height:16px;background:#fff;border-right:1px solid #dadada;border-bottom:1px solid #dadada;box-sizing:border-box;"></div><span style="left:423.0px;top:258.4px;font-size:8.8px;line-height:11px;">.1</span><div style="left:455px;top:255.5px;width:36px;height:16px;background:#fff;border-right:1px solid #dadada;border-bottom:1px solid #dadada;box-sizing:border-box;"></div><span style="left:459.0px;top:258.4px;font-size:8.8px;line-height:11px;">1.</span><div style="left:491px;top:255.5px;width:36px;height:16px;background:#fff;border-right:1px solid #dadada;border-bottom:1px solid #dadada;box-sizing:border-box;"></div><span style="left:495.0px;top:258.4px;font-size:8.8px;line-height:11px;">.1</span><div style="left:15px;top:271.5px;width:21px;height:16px;background:linear-gradient(90deg,#f2f2f2,#e0e0e0);border-right:1px solid #c4c4c4;border-bottom:1px solid #c4c4c4;box-sizing:border-box;"></div><span style="left:28.6px;top:274.4px;font-size:8.8px;line-height:11px;color:#222;">2</span><div style="left:36px;top:271.5px;width:25px;height:16px;background:#fff;border-right:1px solid #dadada;border-bottom:1px solid #dadada;box-sizing:border-box;"></div><svg style="left:43px;top:274.0px" width="10.5" height="10.5" viewBox="0 0 11 11"><rect x="0.5" y="0.5" width="10" height="10" fill="#fff" stroke="#333" stroke-width="1"/><path d="M2.3 5.6 L4.5 7.8 L8.8 3.0" fill="none" stroke="#222" stroke-width="1.1"/></svg><div style="left:61px;top:271.5px;width:52px;height:16px;background:#fff;border-right:1px solid #dadada;border-bottom:1px solid #dadada;box-sizing:border-box;"></div><span style="left:65.0px;top:274.4px;font-size:8.8px;line-height:11px;">NPHI</span><div style="left:113px;top:271.5px;width:62px;height:16px;background:#fff;border-right:1px solid #dadada;border-bottom:1px solid #dadada;box-sizing:border-box;"></div><span style="left:117.0px;top:274.4px;font-size:8.8px;line-height:11px;">EPNSD</span><div style="left:175px;top:271.5px;width:36px;height:16px;background:#fff;border-right:1px solid #dadada;border-bottom:1px solid #dadada;box-sizing:border-box;"></div><span style="left:179.0px;top:274.4px;font-size:8.8px;line-height:11px;">.05</span><div style="left:211px;top:271.5px;width:36px;height:16px;background:#fff;border-right:1px solid #dadada;border-bottom:1px solid #dadada;box-sizing:border-box;"></div><span style="left:215.0px;top:274.4px;font-size:8.8px;line-height:11px;">.3</span><div style="left:247px;top:271.5px;width:36px;height:16px;background:#fff;border-right:1px solid #dadada;border-bottom:1px solid #dadada;box-sizing:border-box;"></div><span style="left:251.0px;top:274.4px;font-size:8.8px;line-height:11px;">.05</span><div style="left:283px;top:271.5px;width:36px;height:16px;background:#fff;border-right:1px solid #dadada;border-bottom:1px solid #dadada;box-sizing:border-box;"></div><span style="left:287.0px;top:274.4px;font-size:8.8px;line-height:11px;">1</span><div style="left:319px;top:271.5px;width:36px;height:16px;background:#fff;border-right:1px solid #dadada;border-bottom:1px solid #dadada;box-sizing:border-box;"></div><span style="left:323.0px;top:274.4px;font-size:8.8px;line-height:11px;">.02</span><div style="left:355px;top:271.5px;width:64px;height:16px;background:#fff;border-right:1px solid #dadada;border-bottom:1px solid #dadada;box-sizing:border-box;"></div><span style="left:359.0px;top:274.4px;font-size:8.8px;line-height:11px;">EPDGAS</span><div style="left:419px;top:271.5px;width:36px;height:16px;background:#fff;border-right:1px solid #dadada;border-bottom:1px solid #dadada;box-sizing:border-box;"></div><span style="left:423.0px;top:274.4px;font-size:8.8px;line-height:11px;">.1</span><div style="left:455px;top:271.5px;width:36px;height:16px;background:#fff;border-right:1px solid #dadada;border-bottom:1px solid #dadada;box-sizing:border-box;"></div><span style="left:459.0px;top:274.4px;font-size:8.8px;line-height:11px;">1</span><div style="left:491px;top:271.5px;width:36px;height:16px;background:#fff;border-right:1px solid #dadada;border-bottom:1px solid #dadada;box-sizing:border-box;"></div><span style="left:495.0px;top:274.4px;font-size:8.8px;line-height:11px;">.1</span><div style="left:15px;top:287.5px;width:21px;height:16px;background:linear-gradient(90deg,#e8d4e8,#dcc4dc);border-right:1px solid #c4c4c4;border-bottom:1px solid #c4c4c4;box-sizing:border-box;"></div><span style="left:28.6px;top:290.4px;font-size:8.8px;line-height:11px;color:#222;">3</span><div style="left:36px;top:287.5px;width:25px;height:16px;background:#f0dcf0;border-right:1px solid #dcc8dc;border-bottom:1px solid #dcc8dc;box-sizing:border-box;"></div><svg style="left:43px;top:290.0px" width="10.5" height="10.5" viewBox="0 0 11 11"><rect x="0.5" y="0.5" width="10" height="10" fill="#fff" stroke="#333" stroke-width="1"/><path d="M2.3 5.6 L4.5 7.8 L8.8 3.0" fill="none" stroke="#222" stroke-width="1.1"/></svg><div style="left:61px;top:287.5px;width:52px;height:16px;background:#f0dcf0;border-right:1px solid #dcc8dc;border-bottom:1px solid #dcc8dc;box-sizing:border-box;"></div><span style="left:65.0px;top:290.4px;font-size:8.8px;line-height:11px;">GR</span><div style="left:113px;top:287.5px;width:62px;height:16px;background:#f0dcf0;border-right:1px solid #dcc8dc;border-bottom:1px solid #dcc8dc;box-sizing:border-box;"></div><span style="left:117.0px;top:290.4px;font-size:8.8px;line-height:11px;">20</span><div style="left:175px;top:287.5px;width:36px;height:16px;background:#f0dcf0;border-right:1px solid #dcc8dc;border-bottom:1px solid #dcc8dc;box-sizing:border-box;"></div><span style="left:179.0px;top:290.4px;font-size:8.8px;line-height:11px;">2</span><div style="left:211px;top:287.5px;width:36px;height:16px;background:#f0dcf0;border-right:1px solid #dcc8dc;border-bottom:1px solid #dcc8dc;box-sizing:border-box;"></div><div style="left:211px;top:287.5px;width:35px;height:15px;background:#a9b4e6;border:1.5px solid #101010;box-sizing:border-box;"></div><span style="left:215.0px;top:290.4px;font-size:8.8px;line-height:11px;color:#304890;">250</span><div style="left:247px;top:287.5px;width:36px;height:16px;background:#f0dcf0;border-right:1px solid #dcc8dc;border-bottom:1px solid #dcc8dc;box-sizing:border-box;"></div><span style="left:251.0px;top:290.4px;font-size:8.8px;line-height:11px;">20</span><div style="left:283px;top:287.5px;width:36px;height:16px;background:#f0dcf0;border-right:1px solid #dcc8dc;border-bottom:1px solid #dcc8dc;box-sizing:border-box;"></div><span style="left:287.0px;top:290.4px;font-size:8.8px;line-height:11px;">0</span><div style="left:319px;top:287.5px;width:36px;height:16px;background:#f0dcf0;border-right:1px solid #dcc8dc;border-bottom:1px solid #dcc8dc;box-sizing:border-box;"></div><span style="left:323.0px;top:290.4px;font-size:8.8px;line-height:11px;">1</span><div style="left:355px;top:287.5px;width:64px;height:16px;background:#f0dcf0;border-right:1px solid #dcc8dc;border-bottom:1px solid #dcc8dc;box-sizing:border-box;"></div><span style="left:359.0px;top:290.4px;font-size:8.8px;line-height:11px;">0</span><div style="left:419px;top:287.5px;width:36px;height:16px;background:#f0dcf0;border-right:1px solid #dcc8dc;border-bottom:1px solid #dcc8dc;box-sizing:border-box;"></div><span style="left:423.0px;top:290.4px;font-size:8.8px;line-height:11px;">1</span><div style="left:455px;top:287.5px;width:36px;height:16px;background:#f0dcf0;border-right:1px solid #dcc8dc;border-bottom:1px solid #dcc8dc;box-sizing:border-box;"></div><span style="left:459.0px;top:290.4px;font-size:8.8px;line-height:11px;">0</span><div style="left:491px;top:287.5px;width:36px;height:16px;background:#f0dcf0;border-right:1px solid #dcc8dc;border-bottom:1px solid #dcc8dc;box-sizing:border-box;"></div><span style="left:495.0px;top:290.4px;font-size:8.8px;line-height:11px;">1</span><div style="left:15px;top:303.5px;width:21px;height:16px;background:linear-gradient(90deg,#f2f2f2,#e0e0e0);border-right:1px solid #c4c4c4;border-bottom:1px solid #c4c4c4;box-sizing:border-box;"></div><span style="left:28.6px;top:306.4px;font-size:8.8px;line-height:11px;color:#222;">4</span><div style="left:36px;top:303.5px;width:25px;height:16px;background:#fff;border-right:1px solid #dadada;border-bottom:1px solid #dadada;box-sizing:border-box;"></div><svg style="left:43px;top:306.0px" width="10.5" height="10.5" viewBox="0 0 11 11"><rect x="0.5" y="0.5" width="10" height="10" fill="#fff" stroke="#333" stroke-width="1"/><path d="M2.3 5.6 L4.5 7.8 L8.8 3.0" fill="none" stroke="#222" stroke-width="1.1"/></svg><div style="left:61px;top:303.5px;width:52px;height:16px;background:#fff;border-right:1px solid #dadada;border-bottom:1px solid #dadada;box-sizing:border-box;"></div><span style="left:65.0px;top:306.4px;font-size:8.8px;line-height:11px;">BVW_SM</span><div style="left:113px;top:303.5px;width:62px;height:16px;background:#fff;border-right:1px solid #dadada;border-bottom:1px solid #dadada;box-sizing:border-box;"></div><span style="left:117.0px;top:306.4px;font-size:8.8px;line-height:11px;">0</span><div style="left:175px;top:303.5px;width:36px;height:16px;background:#fff;border-right:1px solid #dadada;border-bottom:1px solid #dadada;box-sizing:border-box;"></div><span style="left:179.0px;top:306.4px;font-size:8.8px;line-height:11px;">.01</span><div style="left:211px;top:303.5px;width:36px;height:16px;background:#fff;border-right:1px solid #dadada;border-bottom:1px solid #dadada;box-sizing:border-box;"></div><span style="left:215.0px;top:306.4px;font-size:8.8px;line-height:11px;">0</span><div style="left:247px;top:303.5px;width:36px;height:16px;background:#fff;border-right:1px solid #dadada;border-bottom:1px solid #dadada;box-sizing:border-box;"></div><span style="left:251.0px;top:306.4px;font-size:8.8px;line-height:11px;">.01</span><div style="left:283px;top:303.5px;width:36px;height:16px;background:#fff;border-right:1px solid #dadada;border-bottom:1px solid #dadada;box-sizing:border-box;"></div><span style="left:287.0px;top:306.4px;font-size:8.8px;line-height:11px;">1</span><div style="left:319px;top:303.5px;width:36px;height:16px;background:#fff;border-right:1px solid #dadada;border-bottom:1px solid #dadada;box-sizing:border-box;"></div><span style="left:323.0px;top:306.4px;font-size:8.8px;line-height:11px;">.01</span><div style="left:355px;top:303.5px;width:64px;height:16px;background:#fff;border-right:1px solid #dadada;border-bottom:1px solid #dadada;box-sizing:border-box;"></div><span style="left:359.0px;top:306.4px;font-size:8.8px;line-height:11px;">0</span><div style="left:419px;top:303.5px;width:36px;height:16px;background:#fff;border-right:1px solid #dadada;border-bottom:1px solid #dadada;box-sizing:border-box;"></div><span style="left:423.0px;top:306.4px;font-size:8.8px;line-height:11px;">.05</span><div style="left:455px;top:303.5px;width:36px;height:16px;background:#fff;border-right:1px solid #dadada;border-bottom:1px solid #dadada;box-sizing:border-box;"></div><span style="left:459.0px;top:306.4px;font-size:8.8px;line-height:11px;">0</span><div style="left:491px;top:303.5px;width:36px;height:16px;background:#fff;border-right:1px solid #dadada;border-bottom:1px solid #dadada;box-sizing:border-box;"></div><span style="left:495.0px;top:306.4px;font-size:8.8px;line-height:11px;">.01</span><div style="left:15px;top:319.5px;width:21px;height:16px;background:linear-gradient(90deg,#f2f2f2,#e0e0e0);border-right:1px solid #c4c4c4;border-bottom:1px solid #c4c4c4;box-sizing:border-box;"></div><span style="left:28.6px;top:322.4px;font-size:8.8px;line-height:11px;color:#222;">5</span><div style="left:36px;top:319.5px;width:25px;height:16px;background:#fff;border-right:1px solid #dadada;border-bottom:1px solid #dadada;box-sizing:border-box;"></div><svg style="left:43px;top:322.0px" width="10.5" height="10.5" viewBox="0 0 11 11"><rect x="0.5" y="0.5" width="10" height="10" fill="#fff" stroke="#333" stroke-width="1"/><path d="M2.3 5.6 L4.5 7.8 L8.8 3.0" fill="none" stroke="#222" stroke-width="1.1"/></svg><div style="left:61px;top:319.5px;width:52px;height:16px;background:#fff;border-right:1px solid #dadada;border-bottom:1px solid #dadada;box-sizing:border-box;"></div><span style="left:65.0px;top:322.4px;font-size:8.8px;line-height:11px;">BVH_SM</span><div style="left:113px;top:319.5px;width:62px;height:16px;background:#fff;border-right:1px solid #dadada;border-bottom:1px solid #dadada;box-sizing:border-box;"></div><span style="left:117.0px;top:322.4px;font-size:8.8px;line-height:11px;">0</span><div style="left:175px;top:319.5px;width:36px;height:16px;background:#fff;border-right:1px solid #dadada;border-bottom:1px solid #dadada;box-sizing:border-box;"></div><span style="left:179.0px;top:322.4px;font-size:8.8px;line-height:11px;">.01</span><div style="left:211px;top:319.5px;width:36px;height:16px;background:#fff;border-right:1px solid #dadada;border-bottom:1px solid #dadada;box-sizing:border-box;"></div><span style="left:215.0px;top:322.4px;font-size:8.8px;line-height:11px;">0</span><div style="left:247px;top:319.5px;width:36px;height:16px;background:#fff;border-right:1px solid #dadada;border-bottom:1px solid #dadada;box-sizing:border-box;"></div><span style="left:251.0px;top:322.4px;font-size:8.8px;line-height:11px;">.01</span><div style="left:283px;top:319.5px;width:36px;height:16px;background:#fff;border-right:1px solid #dadada;border-bottom:1px solid #dadada;box-sizing:border-box;"></div><span style="left:287.0px;top:322.4px;font-size:8.8px;line-height:11px;">0</span><div style="left:319px;top:319.5px;width:36px;height:16px;background:#fff;border-right:1px solid #dadada;border-bottom:1px solid #dadada;box-sizing:border-box;"></div><span style="left:323.0px;top:322.4px;font-size:8.8px;line-height:11px;">.01</span><div style="left:355px;top:319.5px;width:64px;height:16px;background:#fff;border-right:1px solid #dadada;border-bottom:1px solid #dadada;box-sizing:border-box;"></div><span style="left:359.0px;top:322.4px;font-size:8.8px;line-height:11px;">1</span><div style="left:419px;top:319.5px;width:36px;height:16px;background:#fff;border-right:1px solid #dadada;border-bottom:1px solid #dadada;box-sizing:border-box;"></div><span style="left:423.0px;top:322.4px;font-size:8.8px;line-height:11px;">.01</span><div style="left:455px;top:319.5px;width:36px;height:16px;background:#fff;border-right:1px solid #dadada;border-bottom:1px solid #dadada;box-sizing:border-box;"></div><span style="left:459.0px;top:322.4px;font-size:8.8px;line-height:11px;">0</span><div style="left:491px;top:319.5px;width:36px;height:16px;background:#fff;border-right:1px solid #dadada;border-bottom:1px solid #dadada;box-sizing:border-box;"></div><span style="left:495.0px;top:322.4px;font-size:8.8px;line-height:11px;">.05</span><div style="left:15px;top:335.5px;width:21px;height:16px;background:linear-gradient(90deg,#f2f2f2,#e0e0e0);border-right:1px solid #c4c4c4;border-bottom:1px solid #c4c4c4;box-sizing:border-box;"></div><span style="left:28.6px;top:338.4px;font-size:8.8px;line-height:11px;color:#222;">6</span><div style="left:36px;top:335.5px;width:25px;height:16px;background:#fff;border-right:1px solid #dadada;border-bottom:1px solid #dadada;box-sizing:border-box;"></div><svg style="left:43px;top:338.0px" width="10.5" height="10.5" viewBox="0 0 11 11"><rect x="0.5" y="0.5" width="10" height="10" fill="#fff" stroke="#333" stroke-width="1"/><path d="M2.3 5.6 L4.5 7.8 L8.8 3.0" fill="none" stroke="#222" stroke-width="1.1"/></svg><div style="left:61px;top:335.5px;width:52px;height:16px;background:#fff;border-right:1px solid #dadada;border-bottom:1px solid #dadada;box-sizing:border-box;"></div><span style="left:65.0px;top:338.4px;font-size:8.8px;line-height:11px;">BVB_SM</span><div style="left:113px;top:335.5px;width:62px;height:16px;background:#fff;border-right:1px solid #dadada;border-bottom:1px solid #dadada;box-sizing:border-box;"></div><span style="left:117.0px;top:338.4px;font-size:8.8px;line-height:11px;">0</span><div style="left:175px;top:335.5px;width:36px;height:16px;background:#fff;border-right:1px solid #dadada;border-bottom:1px solid #dadada;box-sizing:border-box;"></div><span style="left:179.0px;top:338.4px;font-size:8.8px;line-height:11px;">.01</span><div style="left:211px;top:335.5px;width:36px;height:16px;background:#fff;border-right:1px solid #dadada;border-bottom:1px solid #dadada;box-sizing:border-box;"></div><span style="left:215.0px;top:338.4px;font-size:8.8px;line-height:11px;">0</span><div style="left:247px;top:335.5px;width:36px;height:16px;background:#fff;border-right:1px solid #dadada;border-bottom:1px solid #dadada;box-sizing:border-box;"></div><span style="left:251.0px;top:338.4px;font-size:8.8px;line-height:11px;">.01</span><div style="left:283px;top:335.5px;width:36px;height:16px;background:#fff;border-right:1px solid #dadada;border-bottom:1px solid #dadada;box-sizing:border-box;"></div><span style="left:287.0px;top:338.4px;font-size:8.8px;line-height:11px;">0</span><div style="left:319px;top:335.5px;width:36px;height:16px;background:#fff;border-right:1px solid #dadada;border-bottom:1px solid #dadada;box-sizing:border-box;"></div><span style="left:323.0px;top:338.4px;font-size:8.8px;line-height:11px;">.01</span><div style="left:355px;top:335.5px;width:64px;height:16px;background:#fff;border-right:1px solid #dadada;border-bottom:1px solid #dadada;box-sizing:border-box;"></div><span style="left:359.0px;top:338.4px;font-size:8.8px;line-height:11px;">0</span><div style="left:419px;top:335.5px;width:36px;height:16px;background:#fff;border-right:1px solid #dadada;border-bottom:1px solid #dadada;box-sizing:border-box;"></div><span style="left:423.0px;top:338.4px;font-size:8.8px;line-height:11px;">.01</span><div style="left:455px;top:335.5px;width:36px;height:16px;background:#fff;border-right:1px solid #dadada;border-bottom:1px solid #dadada;box-sizing:border-box;"></div><span style="left:459.0px;top:338.4px;font-size:8.8px;line-height:11px;">1</span><div style="left:491px;top:335.5px;width:36px;height:16px;background:#fff;border-right:1px solid #dadada;border-bottom:1px solid #dadada;box-sizing:border-box;"></div><span style="left:495.0px;top:338.4px;font-size:8.8px;line-height:11px;">.01</span><div style="left:15px;top:351.5px;width:21px;height:16px;background:linear-gradient(90deg,#f2f2f2,#e0e0e0);border-right:1px solid #c4c4c4;border-bottom:1px solid #c4c4c4;box-sizing:border-box;"></div><span style="left:28.6px;top:354.4px;font-size:8.8px;line-height:11px;color:#222;">7</span><div style="left:36px;top:351.5px;width:25px;height:16px;background:#fff;border-right:1px solid #dadada;border-bottom:1px solid #dadada;box-sizing:border-box;"></div><svg style="left:43px;top:354.0px" width="10.5" height="10.5" viewBox="0 0 11 11"><rect x="0.5" y="0.5" width="10" height="10" fill="#fff" stroke="#333" stroke-width="1"/></svg><div style="left:61px;top:351.5px;width:52px;height:16px;background:#fff;border-right:1px solid #dadada;border-bottom:1px solid #dadada;box-sizing:border-box;"></div><div style="left:113px;top:351.5px;width:62px;height:16px;background:#fff;border-right:1px solid #dadada;border-bottom:1px solid #dadada;box-sizing:border-box;"></div><div style="left:175px;top:351.5px;width:36px;height:16px;background:#fff;border-right:1px solid #dadada;border-bottom:1px solid #dadada;box-sizing:border-box;"></div><div style="left:211px;top:351.5px;width:36px;height:16px;background:#fff;border-right:1px solid #dadada;border-bottom:1px solid #dadada;box-sizing:border-box;"></div><div style="left:247px;top:351.5px;width:36px;height:16px;background:#fff;border-right:1px solid #dadada;border-bottom:1px solid #dadada;box-sizing:border-box;"></div><div style="left:283px;top:351.5px;width:36px;height:16px;background:#fff;border-right:1px solid #dadada;border-bottom:1px solid #dadada;box-sizing:border-box;"></div><div style="left:319px;top:351.5px;width:36px;height:16px;background:#fff;border-right:1px solid #dadada;border-bottom:1px solid #dadada;box-sizing:border-box;"></div><div style="left:355px;top:351.5px;width:64px;height:16px;background:#fff;border-right:1px solid #dadada;border-bottom:1px solid #dadada;box-sizing:border-box;"></div><div style="left:419px;top:351.5px;width:36px;height:16px;background:#fff;border-right:1px solid #dadada;border-bottom:1px solid #dadada;box-sizing:border-box;"></div><div style="left:455px;top:351.5px;width:36px;height:16px;background:#fff;border-right:1px solid #dadada;border-bottom:1px solid #dadada;box-sizing:border-box;"></div><div style="left:491px;top:351.5px;width:36px;height:16px;background:#fff;border-right:1px solid #dadada;border-bottom:1px solid #dadada;box-sizing:border-box;"></div><div style="left:15px;top:367.5px;width:21px;height:16px;background:linear-gradient(90deg,#f2f2f2,#e0e0e0);border-right:1px solid #c4c4c4;border-bottom:1px solid #c4c4c4;box-sizing:border-box;"></div><span style="left:28.6px;top:370.4px;font-size:8.8px;line-height:11px;color:#222;">8</span><div style="left:36px;top:367.5px;width:25px;height:16px;background:#fff;border-right:1px solid #dadada;border-bottom:1px solid #dadada;box-sizing:border-box;"></div><svg style="left:43px;top:370.0px" width="10.5" height="10.5" viewBox="0 0 11 11"><rect x="0.5" y="0.5" width="10" height="10" fill="#fff" stroke="#333" stroke-width="1"/></svg><div style="left:61px;top:367.5px;width:52px;height:16px;background:#fff;border-right:1px solid #dadada;border-bottom:1px solid #dadada;box-sizing:border-box;"></div><div style="left:113px;top:367.5px;width:62px;height:16px;background:#fff;border-right:1px solid #dadada;border-bottom:1px solid #dadada;box-sizing:border-box;"></div><div style="left:175px;top:367.5px;width:36px;height:16px;background:#fff;border-right:1px solid #dadada;border-bottom:1px solid #dadada;box-sizing:border-box;"></div><div style="left:211px;top:367.5px;width:36px;height:16px;background:#fff;border-right:1px solid #dadada;border-bottom:1px solid #dadada;box-sizing:border-box;"></div><div style="left:247px;top:367.5px;width:36px;height:16px;background:#fff;border-right:1px solid #dadada;border-bottom:1px solid #dadada;box-sizing:border-box;"></div><div style="left:283px;top:367.5px;width:36px;height:16px;background:#fff;border-right:1px solid #dadada;border-bottom:1px solid #dadada;box-sizing:border-box;"></div><div style="left:319px;top:367.5px;width:36px;height:16px;background:#fff;border-right:1px solid #dadada;border-bottom:1px solid #dadada;box-sizing:border-box;"></div><div style="left:355px;top:367.5px;width:64px;height:16px;background:#fff;border-right:1px solid #dadada;border-bottom:1px solid #dadada;box-sizing:border-box;"></div><div style="left:419px;top:367.5px;width:36px;height:16px;background:#fff;border-right:1px solid #dadada;border-bottom:1px solid #dadada;box-sizing:border-box;"></div><div style="left:455px;top:367.5px;width:36px;height:16px;background:#fff;border-right:1px solid #dadada;border-bottom:1px solid #dadada;box-sizing:border-box;"></div><div style="left:491px;top:367.5px;width:36px;height:16px;background:#fff;border-right:1px solid #dadada;border-bottom:1px solid #dadada;box-sizing:border-box;"></div><div style="left:15px;top:383.5px;width:21px;height:16px;background:linear-gradient(90deg,#f2f2f2,#e0e0e0);border-right:1px solid #c4c4c4;border-bottom:1px solid #c4c4c4;box-sizing:border-box;"></div><span style="left:28.6px;top:386.4px;font-size:8.8px;line-height:11px;color:#222;">9</span><div style="left:36px;top:383.5px;width:25px;height:16px;background:#fff;border-right:1px solid #dadada;border-bottom:1px solid #dadada;box-sizing:border-box;"></div><svg style="left:43px;top:386.0px" width="10.5" height="10.5" viewBox="0 0 11 11"><rect x="0.5" y="0.5" width="10" height="10" fill="#fff" stroke="#333" stroke-width="1"/></svg><div style="left:61px;top:383.5px;width:52px;height:16px;background:#fff;border-right:1px solid #dadada;border-bottom:1px solid #dadada;box-sizing:border-box;"></div><div style="left:113px;top:383.5px;width:62px;height:16px;background:#fff;border-right:1px solid #dadada;border-bottom:1px solid #dadada;box-sizing:border-box;"></div><div style="left:175px;top:383.5px;width:36px;height:16px;background:#fff;border-right:1px solid #dadada;border-bottom:1px solid #dadada;box-sizing:border-box;"></div><div style="left:211px;top:383.5px;width:36px;height:16px;background:#fff;border-right:1px solid #dadada;border-bottom:1px solid #dadada;box-sizing:border-box;"></div><div style="left:247px;top:383.5px;width:36px;height:16px;background:#fff;border-right:1px solid #dadada;border-bottom:1px solid #dadada;box-sizing:border-box;"></div><div style="left:283px;top:383.5px;width:36px;height:16px;background:#fff;border-right:1px solid #dadada;border-bottom:1px solid #dadada;box-sizing:border-box;"></div><div style="left:319px;top:383.5px;width:36px;height:16px;background:#fff;border-right:1px solid #dadada;border-bottom:1px solid #dadada;box-sizing:border-box;"></div><div style="left:355px;top:383.5px;width:64px;height:16px;background:#fff;border-right:1px solid #dadada;border-bottom:1px solid #dadada;box-sizing:border-box;"></div><div style="left:419px;top:383.5px;width:36px;height:16px;background:#fff;border-right:1px solid #dadada;border-bottom:1px solid #dadada;box-sizing:border-box;"></div><div style="left:455px;top:383.5px;width:36px;height:16px;background:#fff;border-right:1px solid #dadada;border-bottom:1px solid #dadada;box-sizing:border-box;"></div><div style="left:491px;top:383.5px;width:36px;height:16px;background:#fff;border-right:1px solid #dadada;border-bottom:1px solid #dadada;box-sizing:border-box;"></div><div style="left:15px;top:399.5px;width:21px;height:12px;background:linear-gradient(90deg,#f2f2f2,#e0e0e0);border-right:1px solid #c4c4c4;border-bottom:1px solid #c4c4c4;box-sizing:border-box;"></div><span style="left:24.7px;top:402.4px;font-size:8.8px;line-height:11px;color:#222;clip-path:inset(0 0 2.5px 0);">10</span><div style="left:36px;top:399.5px;width:25px;height:12px;background:#fff;border-right:1px solid #dadada;border-bottom:1px solid #dadada;box-sizing:border-box;"></div><div style="left:43px;top:402.0px;width:10.5px;height:10px;overflow:hidden;position:absolute"><svg style="left:0px;top:0px" width="10.5" height="10.5" viewBox="0 0 11 11"><rect x="0.5" y="0.5" width="10" height="10" fill="#fff" stroke="#333" stroke-width="1"/></svg></div><div style="left:61px;top:399.5px;width:52px;height:12px;background:#fff;border-right:1px solid #dadada;border-bottom:1px solid #dadada;box-sizing:border-box;"></div><div style="left:113px;top:399.5px;width:62px;height:12px;background:#fff;border-right:1px solid #dadada;border-bottom:1px solid #dadada;box-sizing:border-box;"></div><div style="left:175px;top:399.5px;width:36px;height:12px;background:#fff;border-right:1px solid #dadada;border-bottom:1px solid #dadada;box-sizing:border-box;"></div><div style="left:211px;top:399.5px;width:36px;height:12px;background:#fff;border-right:1px solid #dadada;border-bottom:1px solid #dadada;box-sizing:border-box;"></div><div style="left:247px;top:399.5px;width:36px;height:12px;background:#fff;border-right:1px solid #dadada;border-bottom:1px solid #dadada;box-sizing:border-box;"></div><div style="left:283px;top:399.5px;width:36px;height:12px;background:#fff;border-right:1px solid #dadada;border-bottom:1px solid #dadada;box-sizing:border-box;"></div><div style="left:319px;top:399.5px;width:36px;height:12px;background:#fff;border-right:1px solid #dadada;border-bottom:1px solid #dadada;box-sizing:border-box;"></div><div style="left:355px;top:399.5px;width:64px;height:12px;background:#fff;border-right:1px solid #dadada;border-bottom:1px solid #dadada;box-sizing:border-box;"></div><div style="left:419px;top:399.5px;width:36px;height:12px;background:#fff;border-right:1px solid #dadada;border-bottom:1px solid #dadada;box-sizing:border-box;"></div><div style="left:455px;top:399.5px;width:36px;height:12px;background:#fff;border-right:1px solid #dadada;border-bottom:1px solid #dadada;box-sizing:border-box;"></div><div style="left:491px;top:399.5px;width:36px;height:12px;background:#fff;border-right:1px solid #dadada;border-bottom:1px solid #dadada;box-sizing:border-box;"></div><div style="left:527px;top:223.5px;width:14px;height:188px;background:#f0f0f0;"></div><div style="left:528px;top:237.5px;width:12px;height:56.5px;background:#c8c8c8;"></div><svg style="left:530.5px;top:229.0px" width="7" height="5" viewBox="0 0 7 5"><path d="M0.6 4.2 L3.5 1 L6.4 4.2" fill="none" stroke="#404040" stroke-width="1.2"/></svg><svg style="left:530.5px;top:401.5px" width="7" height="5" viewBox="0 0 7 5"><path d="M0.6 0.8 L3.5 4 L6.4 0.8" fill="none" stroke="#404040" stroke-width="1.2"/></svg><div style="left:15px;top:411.5px;width:512px;height:13.5px;background:#f0f0f0;"></div><div style="left:29px;top:412.5px;width:101px;height:11.5px;background:#c8c8c8;"></div><svg style="left:20px;top:414.75px" width="5" height="7" viewBox="0 0 5 7"><path d="M4.2 0.6 L1 3.5 L4.2 6.4" fill="none" stroke="#404040" stroke-width="1.2"/></svg><svg style="left:517px;top:414.75px" width="5" height="7" viewBox="0 0 5 7"><path d="M0.8 0.6 L4 3.5 L0.8 6.4" fill="none" stroke="#404040" stroke-width="1.2"/></svg><div style="left:527px;top:411.5px;width:14px;height:13.5px;background:#f0f0f0;"></div></div><span style="left:547.8px;top:319.9px;font-size:9px;line-height:12px;">x</span><div style="left:1px;top:0;width:0;height:0"><div style="left:560px;top:222px;width:200px;height:204px;background:#fff;border:1px solid #828282;box-sizing:border-box;"></div><div style="left:561px;top:223.5px;width:20px;height:16px;background:linear-gradient(#f4f4f4,#e2e2e2);border-right:1px solid #c0c0c0;border-bottom:1px solid #c0c0c0;box-sizing:border-box;"></div><div style="left:581px;top:223.5px;width:164px;height:16px;background:linear-gradient(#f6f6f6,#e0e0e0);border-right:1px solid #c0c0c0;border-bottom:1px solid #c0c0c0;box-sizing:border-box;"></div><span style="left:650.1px;top:226.4px;font-size:8.8px;line-height:11px;">Output</span><div style="left:561px;top:239.5px;width:20px;height:16px;background:linear-gradient(#f4f4f4,#e2e2e2);border-right:1px solid #c0c0c0;border-bottom:1px solid #c0c0c0;box-sizing:border-box;"></div><div style="left:581px;top:239.5px;width:78px;height:16px;background:#aed6e8;border-right:1px solid #9cc4d6;border-bottom:1px solid #9cc4d6;box-sizing:border-box;"></div><span style="left:603.3px;top:242.4px;font-size:8.8px;line-height:11px;color:#1a2a3a;">O/P Vols</span><div style="left:659px;top:239.5px;width:36px;height:16px;background:#fdf3b8;border-right:1px solid #dcd4a0;border-bottom:1px solid #dcd4a0;box-sizing:border-box;"></div><span style="left:667.8px;top:242.4px;font-size:8.8px;line-height:11px;">Type</span><div style="left:695px;top:239.5px;width:50px;height:16px;background:#d2f7fd;border-right:1px solid #b4dce2;border-bottom:1px solid #b4dce2;box-sizing:border-box;"></div><span style="left:713.9px;top:242.4px;font-size:8.8px;line-height:11px;">Alg</span><div style="left:561px;top:255.5px;width:20px;height:16px;background:linear-gradient(90deg,#f2f2f2,#e0e0e0);border-right:1px solid #c4c4c4;border-bottom:1px solid #c4c4c4;box-sizing:border-box;"></div><span style="left:573.6px;top:258.4px;font-size:8.8px;line-height:11px;color:#222;">1</span><div style="left:581px;top:255.5px;width:78px;height:16px;background:#fff;border-right:1px solid #dadada;border-bottom:1px solid #dadada;box-sizing:border-box;"></div><span style="left:585.0px;top:258.4px;font-size:8.8px;line-height:11px;">SAND</span><div style="left:659px;top:255.5px;width:36px;height:16px;background:#fff;border-right:1px solid #dadada;border-bottom:1px solid #dadada;box-sizing:border-box;"></div><span style="left:663.0px;top:258.4px;font-size:8.8px;line-height:11px;">Miner...</span><div style="left:695px;top:255.5px;width:50px;height:16px;background:#fff;border-right:1px solid #dadada;border-bottom:1px solid #dadada;box-sizing:border-box;"></div><span style="left:699.0px;top:258.4px;font-size:8.8px;line-height:11px;">Solve</span><div style="left:561px;top:271.5px;width:20px;height:16px;background:linear-gradient(90deg,#f2f2f2,#e0e0e0);border-right:1px solid #c4c4c4;border-bottom:1px solid #c4c4c4;box-sizing:border-box;"></div><span style="left:573.6px;top:274.4px;font-size:8.8px;line-height:11px;color:#222;">2</span><div style="left:581px;top:271.5px;width:78px;height:16px;background:#fff;border-right:1px solid #dadada;border-bottom:1px solid #dadada;box-sizing:border-box;"></div><span style="left:585.0px;top:274.4px;font-size:8.8px;line-height:11px;">VCLSM</span><div style="left:659px;top:271.5px;width:36px;height:16px;background:#fff;border-right:1px solid #dadada;border-bottom:1px solid #dadada;box-sizing:border-box;"></div><span style="left:663.0px;top:274.4px;font-size:8.8px;line-height:11px;">Clay</span><div style="left:695px;top:271.5px;width:50px;height:16px;background:#fff;border-right:1px solid #dadada;border-bottom:1px solid #dadada;box-sizing:border-box;"></div><span style="left:699.0px;top:274.4px;font-size:8.8px;line-height:11px;">Solve</span><div style="left:561px;top:287.5px;width:20px;height:16px;background:linear-gradient(90deg,#f2f2f2,#e0e0e0);border-right:1px solid #c4c4c4;border-bottom:1px solid #c4c4c4;box-sizing:border-box;"></div><span style="left:573.6px;top:290.4px;font-size:8.8px;line-height:11px;color:#222;">3</span><div style="left:581px;top:287.5px;width:78px;height:16px;background:#fff;border-right:1px solid #dadada;border-bottom:1px solid #dadada;box-sizing:border-box;"></div><span style="left:585.0px;top:290.4px;font-size:8.8px;line-height:11px;">BVW_SM</span><div style="left:659px;top:287.5px;width:36px;height:16px;background:#fff;border-right:1px solid #dadada;border-bottom:1px solid #dadada;box-sizing:border-box;"></div><span style="left:663.0px;top:290.4px;font-size:8.8px;line-height:11px;">Por</span><div style="left:695px;top:287.5px;width:50px;height:16px;background:#fff;border-right:1px solid #dadada;border-bottom:1px solid #dadada;box-sizing:border-box;"></div><span style="left:699.0px;top:290.4px;font-size:8.8px;line-height:11px;">Solve</span><div style="left:561px;top:303.5px;width:20px;height:16px;background:linear-gradient(90deg,#f2f2f2,#e0e0e0);border-right:1px solid #c4c4c4;border-bottom:1px solid #c4c4c4;box-sizing:border-box;"></div><span style="left:573.6px;top:306.4px;font-size:8.8px;line-height:11px;color:#222;">4</span><div style="left:581px;top:303.5px;width:78px;height:16px;background:#fff;border-right:1px solid #dadada;border-bottom:1px solid #dadada;box-sizing:border-box;"></div><span style="left:585.0px;top:306.4px;font-size:8.8px;line-height:11px;">BVH_SM</span><div style="left:659px;top:303.5px;width:36px;height:16px;background:#fff;border-right:1px solid #dadada;border-bottom:1px solid #dadada;box-sizing:border-box;"></div><span style="left:663.0px;top:306.4px;font-size:8.8px;line-height:11px;">Por</span><div style="left:695px;top:303.5px;width:50px;height:16px;background:#fff;border-right:1px solid #dadada;border-bottom:1px solid #dadada;box-sizing:border-box;"></div><span style="left:699.0px;top:306.4px;font-size:8.8px;line-height:11px;">Solve</span><div style="left:561px;top:319.5px;width:20px;height:16px;background:linear-gradient(90deg,#f2f2f2,#e0e0e0);border-right:1px solid #c4c4c4;border-bottom:1px solid #c4c4c4;box-sizing:border-box;"></div><span style="left:573.6px;top:322.4px;font-size:8.8px;line-height:11px;color:#222;">5</span><div style="left:581px;top:319.5px;width:78px;height:16px;background:#fff;border-right:1px solid #dadada;border-bottom:1px solid #dadada;box-sizing:border-box;"></div><span style="left:585.0px;top:322.4px;font-size:8.8px;line-height:11px;">BVB_SM</span><div style="left:659px;top:319.5px;width:36px;height:16px;background:#fff;border-right:1px solid #dadada;border-bottom:1px solid #dadada;box-sizing:border-box;"></div><span style="left:663.0px;top:322.4px;font-size:8.8px;line-height:11px;">PorBd</span><div style="left:695px;top:319.5px;width:50px;height:16px;background:#fff;border-right:1px solid #dadada;border-bottom:1px solid #dadada;box-sizing:border-box;"></div><span style="left:699.0px;top:322.4px;font-size:8.8px;line-height:11px;">Solve</span><div style="left:561px;top:335.5px;width:20px;height:16px;background:linear-gradient(90deg,#f2f2f2,#e0e0e0);border-right:1px solid #c4c4c4;border-bottom:1px solid #c4c4c4;box-sizing:border-box;"></div><span style="left:573.6px;top:338.4px;font-size:8.8px;line-height:11px;color:#222;">6</span><div style="left:581px;top:335.5px;width:78px;height:16px;background:#fff;border-right:1px solid #dadada;border-bottom:1px solid #dadada;box-sizing:border-box;"></div><div style="left:659px;top:335.5px;width:36px;height:16px;background:#fff;border-right:1px solid #dadada;border-bottom:1px solid #dadada;box-sizing:border-box;"></div><span style="left:663.0px;top:338.4px;font-size:8.8px;line-height:11px;">Por</span><div style="left:695px;top:335.5px;width:50px;height:16px;background:#fff;border-right:1px solid #dadada;border-bottom:1px solid #dadada;box-sizing:border-box;"></div><span style="left:699.0px;top:338.4px;font-size:8.8px;line-height:11px;">Set_To_O</span><div style="left:561px;top:351.5px;width:20px;height:16px;background:linear-gradient(90deg,#f2f2f2,#e0e0e0);border-right:1px solid #c4c4c4;border-bottom:1px solid #c4c4c4;box-sizing:border-box;"></div><span style="left:573.6px;top:354.4px;font-size:8.8px;line-height:11px;color:#222;">7</span><div style="left:581px;top:351.5px;width:78px;height:16px;background:#fff;border-right:1px solid #dadada;border-bottom:1px solid #dadada;box-sizing:border-box;"></div><div style="left:659px;top:351.5px;width:36px;height:16px;background:#fff;border-right:1px solid #dadada;border-bottom:1px solid #dadada;box-sizing:border-box;"></div><span style="left:663.0px;top:354.4px;font-size:8.8px;line-height:11px;">Por</span><div style="left:695px;top:351.5px;width:50px;height:16px;background:#fff;border-right:1px solid #dadada;border-bottom:1px solid #dadada;box-sizing:border-box;"></div><span style="left:699.0px;top:354.4px;font-size:8.8px;line-height:11px;">Set_To_O</span><div style="left:561px;top:367.5px;width:20px;height:16px;background:linear-gradient(90deg,#f2f2f2,#e0e0e0);border-right:1px solid #c4c4c4;border-bottom:1px solid #c4c4c4;box-sizing:border-box;"></div><span style="left:573.6px;top:370.4px;font-size:8.8px;line-height:11px;color:#222;">8</span><div style="left:581px;top:367.5px;width:78px;height:16px;background:#fff;border-right:1px solid #dadada;border-bottom:1px solid #dadada;box-sizing:border-box;"></div><div style="left:659px;top:367.5px;width:36px;height:16px;background:#fff;border-right:1px solid #dadada;border-bottom:1px solid #dadada;box-sizing:border-box;"></div><span style="left:663.0px;top:370.4px;font-size:8.8px;line-height:11px;">Por</span><div style="left:695px;top:367.5px;width:50px;height:16px;background:#fff;border-right:1px solid #dadada;border-bottom:1px solid #dadada;box-sizing:border-box;"></div><span style="left:699.0px;top:370.4px;font-size:8.8px;line-height:11px;">Set_To_O</span><div style="left:561px;top:383.5px;width:20px;height:16px;background:linear-gradient(90deg,#f2f2f2,#e0e0e0);border-right:1px solid #c4c4c4;border-bottom:1px solid #c4c4c4;box-sizing:border-box;"></div><span style="left:573.6px;top:386.4px;font-size:8.8px;line-height:11px;color:#222;">9</span><div style="left:581px;top:383.5px;width:78px;height:16px;background:#fff;border-right:1px solid #dadada;border-bottom:1px solid #dadada;box-sizing:border-box;"></div><div style="left:659px;top:383.5px;width:36px;height:16px;background:#fff;border-right:1px solid #dadada;border-bottom:1px solid #dadada;box-sizing:border-box;"></div><span style="left:663.0px;top:386.4px;font-size:8.8px;line-height:11px;">Por</span><div style="left:695px;top:383.5px;width:50px;height:16px;background:#fff;border-right:1px solid #dadada;border-bottom:1px solid #dadada;box-sizing:border-box;"></div><span style="left:699.0px;top:386.4px;font-size:8.8px;line-height:11px;">Set_To_O</span><div style="left:561px;top:399.5px;width:20px;height:16px;background:linear-gradient(90deg,#f2f2f2,#e0e0e0);border-right:1px solid #c4c4c4;border-bottom:1px solid #c4c4c4;box-sizing:border-box;"></div><span style="left:568.7px;top:402.4px;font-size:8.8px;line-height:11px;color:#222;">10</span><div style="left:581px;top:399.5px;width:78px;height:16px;background:#fff;border-right:1px solid #dadada;border-bottom:1px solid #dadada;box-sizing:border-box;"></div><div style="left:659px;top:399.5px;width:36px;height:16px;background:#fff;border-right:1px solid #dadada;border-bottom:1px solid #dadada;box-sizing:border-box;"></div><span style="left:663.0px;top:402.4px;font-size:8.8px;line-height:11px;">Por</span><div style="left:695px;top:399.5px;width:50px;height:16px;background:#fff;border-right:1px solid #dadada;border-bottom:1px solid #dadada;box-sizing:border-box;"></div><span style="left:699.0px;top:402.4px;font-size:8.8px;line-height:11px;">Solve</span><div style="left:561px;top:415.5px;width:20px;height:10px;background:linear-gradient(90deg,#f2f2f2,#e0e0e0);border-right:1px solid #c4c4c4;border-bottom:1px solid #c4c4c4;box-sizing:border-box;"></div><span style="left:569.4px;top:418.4px;font-size:8.8px;line-height:11px;color:#222;clip-path:inset(0 0 3.5px 0);">11</span><div style="left:581px;top:415.5px;width:78px;height:10px;background:#fff;border-right:1px solid #dadada;border-bottom:1px solid #dadada;box-sizing:border-box;"></div><div style="left:659px;top:415.5px;width:36px;height:10px;background:#fff;border-right:1px solid #dadada;border-bottom:1px solid #dadada;box-sizing:border-box;"></div><span style="left:663.0px;top:418.4px;font-size:8.8px;line-height:11px;clip-path:inset(0 0 3.5px 0);">Por</span><div style="left:695px;top:415.5px;width:50px;height:10px;background:#fff;border-right:1px solid #dadada;border-bottom:1px solid #dadada;box-sizing:border-box;"></div><span style="left:699.0px;top:418.4px;font-size:8.8px;line-height:11px;clip-path:inset(0 0 3.5px 0);">Solve</span><div style="left:745px;top:223.5px;width:14px;height:202px;background:#f0f0f0;"></div><div style="left:746px;top:237.5px;width:12px;height:65px;background:#c8c8c8;"></div><svg style="left:748.5px;top:229.0px" width="7" height="5" viewBox="0 0 7 5"><path d="M0.6 4.2 L3.5 1 L6.4 4.2" fill="none" stroke="#404040" stroke-width="1.2"/></svg><svg style="left:748.5px;top:415.5px" width="7" height="5" viewBox="0 0 7 5"><path d="M0.6 0.8 L3.5 4 L6.4 0.8" fill="none" stroke="#404040" stroke-width="1.2"/></svg></div><div style="left:7px;top:441px;width:761px;height:1px;background:#dcdcdc;"></div><div style="left:11px;top:436px;width:72px;height:10px;background:#f4f4f4;"></div><span style="left:13.0px;top:436.4px;font-size:8.8px;line-height:11px;letter-spacing:-0.301px;">Algorithm Settings</span><svg style="left:10.5px;top:452.5px" width="10.5" height="10.5" viewBox="0 0 11 11"><rect x="0.5" y="0.5" width="10" height="10" fill="#fff" stroke="#333" stroke-width="1"/><path d="M2.3 5.6 L4.5 7.8 L8.8 3.0" fill="none" stroke="#222" stroke-width="1.1"/></svg><span style="left:26.0px;top:452.9px;font-size:8.8px;line-height:11px;letter-spacing:-0.224px;">Use Prior Matrix</span><svg style="left:91px;top:452.5px" width="10.5" height="10.5" viewBox="0 0 11 11"><rect x="0.5" y="0.5" width="10" height="10" fill="#fff" stroke="#333" stroke-width="1"/></svg><span style="left:106.5px;top:452.9px;font-size:8.8px;line-height:11px;letter-spacing:-0.179px;">Test For Coal</span><div style="left:162px;top:449.5px;width:256px;height:18px;background:#e4e4e4;border:1px solid #adadad;box-sizing:border-box;"></div><span style="left:165.5px;top:454.2px;font-size:8.8px;line-height:11px;">Compute Main Matrix Only</span><svg style="left:406px;top:456.0px" width="8" height="5" viewBox="0 0 8 5"><path d="M0.8 0.8 L4 4 L7.2 0.8" fill="none" stroke="#404040" stroke-width="1.1"/></svg><svg style="left:10.5px;top:472.5px" width="10.5" height="10.5" viewBox="0 0 11 11"><rect x="0.5" y="0.5" width="10" height="10" fill="#fff" stroke="#333" stroke-width="1"/><path d="M2.3 5.6 L4.5 7.8 L8.8 3.0" fill="none" stroke="#222" stroke-width="1.1"/></svg><span style="left:26.0px;top:472.9px;font-size:8.8px;line-height:11px;letter-spacing:-0.155px;">Calculate Sw</span><svg style="left:91px;top:472.5px" width="10.5" height="10.5" viewBox="0 0 11 11"><rect x="0.5" y="0.5" width="10" height="10" fill="#fff" stroke="#333" stroke-width="1"/></svg><span style="left:106.5px;top:472.9px;font-size:8.8px;line-height:11px;letter-spacing:-0.146px;">Test For Salt</span><svg style="left:163px;top:472.5px" width="10.5" height="10.5" viewBox="0 0 11 11"><rect x="0.5" y="0.5" width="10" height="10" fill="#fff" stroke="#333" stroke-width="1"/><path d="M2.3 5.6 L4.5 7.8 L8.8 3.0" fill="none" stroke="#222" stroke-width="1.1"/></svg><span style="left:177.5px;top:473.7px;font-size:8.8px;line-height:11px;letter-spacing:-0.207px;">Iterate</span><span style="left:212.0px;top:474.9px;font-size:8.8px;line-height:11px;letter-spacing:-0.236px;">Number of Iterations</span><div style="left:290px;top:471px;width:39px;height:16.5px;background:#fff;border:1px solid #7a7a7a;box-sizing:border-box;"></div><span style="left:293.0px;top:474.9px;font-size:8.8px;line-height:11px;">10</span><div style="left:451px;top:472.5px;width:143px;height:16.5px;background:#e1e1e1;border:1px solid #adadad;box-sizing:border-box;"></div><span style="left:477.3px;top:476.4px;font-size:8.8px;line-height:11px;">Edit Default End Points</span><div style="left:7px;top:495px;width:761px;height:1px;background:#dcdcdc;"></div><div style="left:7px;top:503.7px;width:761px;height:1.3px;background:#6e6e6e;"></div><div style="left:7px;top:505px;width:19.5px;height:15.5px;background:linear-gradient(90deg,#f6f6f6,#e9e9e9 55%,#d4d4d6);border-right:1px solid #c8c8c8;border-bottom:1px solid #c8c8c8;box-sizing:border-box;"></div><div style="left:26.5px;top:505px;width:20px;height:15.5px;background:#d0d0d4;border-right:1px solid #c4c4c8;border-bottom:1px solid #c4c4c8;box-sizing:border-box;"></div><div style="left:46.5px;top:505px;width:513px;height:15.5px;background:#fdd5b6;border-right:1px solid #e4c4ac;border-bottom:1px solid #e4c4ac;box-sizing:border-box;"></div><span style="left:286.7px;top:507.6px;font-size:8.8px;line-height:11px;">Intervals</span><div style="left:559.5px;top:505px;width:208.5px;height:15.5px;background:#91ee8f;border-right:1px solid #84da84;border-bottom:1px solid #84da84;box-sizing:border-box;"></div><span style="left:647.7px;top:507.6px;font-size:8.8px;line-height:11px;">Zone for</span><div style="left:7px;top:520.5px;width:19.5px;height:15.5px;background:linear-gradient(90deg,#f6f6f6,#e9e9e9 55%,#d4d4d6);border-right:1px solid #c8c8c8;border-bottom:1px solid #c8c8c8;box-sizing:border-box;"></div><span style="left:13.9px;top:524.2px;font-size:8.8px;line-height:11px;">+</span><div style="left:26.5px;top:520.5px;width:20px;height:15.5px;background:#d0d0d4;border-right:1px solid #c4c4c8;border-bottom:1px solid #c4c4c8;box-sizing:border-box;"></div><span style="left:28.8px;top:524.2px;font-size:8.8px;line-height:11px;letter-spacing:-0.217px;">Use</span><div style="left:46.5px;top:520.5px;width:166px;height:15.5px;background:#fffbd8;border-right:1px solid #e4e0bc;border-bottom:1px solid #e4e0bc;box-sizing:border-box;"></div><span style="left:113.6px;top:524.2px;font-size:8.8px;line-height:11px;">Start (ft)</span><div style="left:212.5px;top:520.5px;width:166px;height:15.5px;background:#fffbd8;border-right:1px solid #e4e0bc;border-bottom:1px solid #e4e0bc;box-sizing:border-box;"></div><span style="left:279.9px;top:524.2px;font-size:8.8px;line-height:11px;">Stop (ft)</span><div style="left:378.5px;top:520.5px;width:181px;height:15.5px;background:#add5e8;border-right:1px solid #9cc4d8;border-bottom:1px solid #9cc4d8;box-sizing:border-box;"></div><span style="left:466.0px;top:524.2px;font-size:8.8px;line-height:11px;">Zone</span><div style="left:559.5px;top:520.5px;width:208.5px;height:15.5px;background:#91ee8f;border-right:1px solid #84da84;border-bottom:1px solid #84da84;box-sizing:border-box;"></div><span style="left:641.3px;top:524.2px;font-size:8.8px;line-height:11px;">Parameters</span><div style="left:7px;top:536px;width:19.5px;height:16px;background:linear-gradient(90deg,#f6f6f6,#e9e9e9 55%,#d4d4d6);border-right:1px solid #c8c8c8;border-bottom:1px solid #c8c8c8;box-sizing:border-box;"></div><span style="left:18.1px;top:539.7px;font-size:8.8px;line-height:11px;">1</span><div style="left:26.5px;top:536px;width:20px;height:16px;background:#d0d0d4;border-right:1px solid #c4c4c8;border-bottom:1px solid #c4c4c8;box-sizing:border-box;"></div><svg style="left:30.2px;top:538.7px" width="10.5" height="10.5" viewBox="0 0 11 11"><rect x="0.5" y="0.5" width="10" height="10" fill="#fff" stroke="#333" stroke-width="1"/><path d="M2.3 5.6 L4.5 7.8 L8.8 3.0" fill="none" stroke="#222" stroke-width="1.1"/></svg><div style="left:46.5px;top:536px;width:166px;height:16px;background:#c2c2c2;border-right:1px solid #cfcfcf;border-bottom:1px solid #cfcfcf;box-sizing:border-box;"></div><div style="left:212.5px;top:536px;width:166px;height:16px;background:#c2c2c2;border-right:1px solid #cfcfcf;border-bottom:1px solid #cfcfcf;box-sizing:border-box;"></div><div style="left:378.5px;top:536px;width:181px;height:16px;background:#add5e8;border-right:1px solid #9cc4d8;border-bottom:1px solid #9cc4d8;box-sizing:border-box;"></div><svg style="left:381px;top:538.7px" width="10.5" height="10.5" viewBox="0 0 11 11"><rect x="0.5" y="0.5" width="10" height="10" fill="#fff" stroke="#333" stroke-width="1"/><path d="M2.3 5.6 L4.5 7.8 L8.8 3.0" fill="none" stroke="#222" stroke-width="1.1"/></svg><span style="left:396.5px;top:539.7px;font-size:8.8px;line-height:11px;letter-spacing:0.068px;">WorkingInterval</span><div style="left:559.5px;top:536px;width:208.5px;height:16px;background:#91ee8f;border-right:1px solid #84da84;border-bottom:1px solid #84da84;box-sizing:border-box;"></div><div style="left:7px;top:552px;width:19.5px;height:16.3px;background:linear-gradient(90deg,#f6f6f6,#e9e9e9 55%,#d4d4d6);border-right:1px solid #c8c8c8;border-bottom:1px solid #c8c8c8;box-sizing:border-box;"></div><span style="left:14.8px;top:555.6px;font-size:8.8px;line-height:11px;color:#707070;">...</span><div style="left:26.5px;top:552px;width:20px;height:16.3px;background:#d0d0d4;border-right:1px solid #c4c4c8;border-bottom:1px solid #c4c4c8;box-sizing:border-box;"></div><span style="left:31.8px;top:555.6px;font-size:8.8px;line-height:11px;color:#707070;">...</span><div style="left:46.5px;top:552px;width:166px;height:16.3px;background:#fffbd8;border-right:1px solid #e4e0bc;border-bottom:1px solid #e4e0bc;box-sizing:border-box;"></div><span style="left:125.8px;top:555.6px;font-size:8.8px;line-height:11px;color:#707070;">...</span><div style="left:212.5px;top:552px;width:166px;height:16.3px;background:#fffbd8;border-right:1px solid #e4e0bc;border-bottom:1px solid #e4e0bc;box-sizing:border-box;"></div><span style="left:291.8px;top:555.6px;font-size:8.8px;line-height:11px;color:#707070;">...</span><div style="left:378.5px;top:552px;width:181px;height:16.3px;background:#add5e8;border-right:1px solid #9cc4d8;border-bottom:1px solid #9cc4d8;box-sizing:border-box;"></div><span style="left:382.3px;top:555.6px;font-size:8.8px;line-height:11px;color:#707070;">...</span><span style="left:472.3px;top:555.6px;font-size:8.8px;line-height:11px;color:#707070;">...</span><div style="left:559.5px;top:552px;width:208.5px;height:16.3px;background:#91ee8f;border-right:1px solid #84da84;border-bottom:1px solid #84da84;box-sizing:border-box;"></div><span style="left:660.3px;top:555.6px;font-size:8.8px;line-height:11px;color:#707070;">...</span><div style="left:7px;top:571px;width:761px;height:2px;background:linear-gradient(#9a9a9a,#c4c4c4);"></div><span style="left:13.0px;top:580.9px;font-size:8.8px;line-height:11px;letter-spacing:-0.366px;">Sampling Grid</span><div style="left:11px;top:593.5px;width:112px;height:17px;background:#e4e4e4;border:1px solid #adadad;box-sizing:border-box;"></div><span style="left:14.5px;top:597.7px;font-size:8.8px;line-height:11px;">Default</span><svg style="left:111px;top:599.5px" width="8" height="5" viewBox="0 0 8 5"><path d="M0.8 0.8 L4 4 L7.2 0.8" fill="none" stroke="#404040" stroke-width="1.1"/></svg><div style="left:7px;top:613.5px;width:761px;height:1px;background:#e0e0e0;"></div><div style="left:11px;top:616px;width:58.5px;height:17px;background:#e1e1e1;border:1px solid #adadad;box-sizing:border-box;"></div><span style="left:31.2px;top:620.2px;font-size:8.8px;line-height:11px;">Help</span><div style="left:570.5px;top:616px;width:57px;height:17px;background:#e1e1e1;border:1px solid #adadad;box-sizing:border-box;"></div><span style="left:585.3px;top:620.2px;font-size:8.8px;line-height:11px;">History</span><div style="left:638.5px;top:616px;width:57px;height:17px;background:#e1e1e1;border:1px solid #adadad;box-sizing:border-box;"></div><span style="left:655.8px;top:620.2px;font-size:8.8px;line-height:11px;">Close</span><div style="left:706.5px;top:616px;width:57.5px;height:17px;background:#e1e1e1;border:1px solid #adadad;box-sizing:border-box;"></div><span style="left:727.2px;top:620.2px;font-size:8.8px;line-height:11px;">Run</span><div style="left:5px;top:639px;width:764px;height:16.5px;background:linear-gradient(#e9edf8,#d5ddf0 50%,#dfe5f4);"></div><div style="left:658px;top:640px;width:110px;height:15.5px;background:linear-gradient(#c3cfea,#aebde0);"></div><span style="left:664.5px;top:640.4px;font-size:9.8px;line-height:13px;letter-spacing:-0.058px;color:#1a1a2a;">Calculation Complete</span><div style="left:0px;top:655.5px;width:775px;height:4.5px;background:linear-gradient(#dfe5f2,#c8d4ea 70%,#9fb2d2);"></div><div style="left:776px;top:8px;width:747px;height:832px;background:#fff;box-shadow:0 0 6px rgba(0,0,0,0.35);"></div><svg style="left:782px;top:12.5px" width="13" height="13" viewBox="0 0 13 13"><rect x="0.5" y="0.5" width="12" height="12" fill="#e4ecf8" stroke="#98a8c0" stroke-width="0.8"/><path d="M6.5 1.5 V11.5 M3 5 L6.5 6.5 L10.5 6.5" stroke="#6a7a90" stroke-width="0.8" fill="none"/><circle cx="6.5" cy="3" r="1" fill="#4060c0"/><circle cx="3" cy="5" r="1" fill="#c04040"/><circle cx="10.5" cy="6.5" r="1" fill="#c04040"/><circle cx="6.5" cy="10.5" r="1" fill="#4060c0"/></svg><span style="left:800.0px;top:13.0px;font-size:10.2px;line-height:13px;letter-spacing:-0.422px;color:#111;">RPM Workflow Project - Starting_Point_RB5, End Member1: Quartz, End Member2: Clay, Pore Fluid: Water</span><div style="left:1427px;top:19.5px;width:9px;height:1px;background:#222;"></div><div style="left:1462.5px;top:15px;width:9px;height:9px;border:1px solid #222;box-sizing:border-box;"></div><svg style="left:1499px;top:14.5px" width="10" height="10" viewBox="0 0 10 10"><path d="M0.5 0.5 L9.5 9.5 M9.5 0.5 L0.5 9.5" stroke="#222" stroke-width="1"/></svg><span style="left:782.0px;top:33.5px;font-size:10.6px;line-height:14px;letter-spacing:-0.270px;color:#111;">File</span><span style="left:810.0px;top:33.5px;font-size:10.6px;line-height:14px;letter-spacing:-0.566px;color:#111;">Edit</span><span style="left:838.5px;top:33.5px;font-size:10.6px;line-height:14px;letter-spacing:-0.848px;color:#111;">Data</span><span style="left:870.5px;top:33.5px;font-size:10.6px;line-height:14px;letter-spacing:-0.577px;color:#111;">Calculate</span><span style="left:922.0px;top:33.5px;font-size:10.6px;line-height:14px;letter-spacing:-0.696px;color:#111;">View</span><span style="left:955.0px;top:33.5px;font-size:10.6px;line-height:14px;letter-spacing:-0.450px;color:#111;">Help</span><div style="left:777px;top:48px;width:745px;height:28.5px;background:#f0f0f0;"></div><div style="left:777px;top:76px;width:745px;height:1.5px;background:#7a7a7a;"></div><div style="left:780.5px;top:52.5px;width:1.2px;height:1.2px;background:#b0b0b0;"></div><div style="left:780.5px;top:55.7px;width:1.2px;height:1.2px;background:#b0b0b0;"></div><div style="left:780.5px;top:58.9px;width:1.2px;height:1.2px;background:#b0b0b0;"></div><div style="left:780.5px;top:62.1px;width:1.2px;height:1.2px;background:#b0b0b0;"></div><div style="left:780.5px;top:65.3px;width:1.2px;height:1.2px;background:#b0b0b0;"></div><div style="left:780.5px;top:68.5px;width:1.2px;height:1.2px;background:#b0b0b0;"></div><svg style="left:786.0px;top:52.0px" width="20" height="20" viewBox="0 0 20 20"><path d="M5.5 2.5 H12 L15 5.5 V17.5 H5.5Z" fill="#fbf4c4" stroke="#b8a868" stroke-width="0.9"/><path d="M12 2.5 V5.5 H15" fill="#fffbe0" stroke="#b8a868" stroke-width="0.7"/></svg><svg style="left:811.0px;top:52.0px" width="20" height="20" viewBox="0 0 20 20"><path d="M2 17 L4.5 6 L9 4.5 L15.5 3 L16 5 L18.5 6.5 L14 16.5Z" fill="#e8b44c" stroke="#a87820" stroke-width="0.9"/><path d="M5 14.5 L8.5 7.5 L17 5.5 L13 14Z" fill="#fff8e4" stroke="#b89040" stroke-width="0.6"/><path d="M2 17 L6.5 9.5 L18.5 6.5 L14 16.5Z" fill="#f0c464" stroke="#a87820" stroke-width="0.8" opacity="0.9"/></svg><svg style="left:835.5px;top:52.0px" width="20" height="20" viewBox="0 0 20 20"><path d="M3 3 H17 V17 H4.5 L3 15.5Z" fill="#5a82c8" stroke="#3a5a98" stroke-width="0.9"/><rect x="5.5" y="3.5" width="9" height="6.5" fill="#e8eef8"/><rect x="6.5" y="12" width="7" height="5" fill="#c8d0e0"/><rect x="7.5" y="13" width="2" height="3.2" fill="#3a5a98"/></svg><svg style="left:860.5px;top:52.0px" width="20" height="20" viewBox="0 0 20 20"><path d="M3 4 H16 V17 H4.5 L3 15.5Z" fill="#5a82c8" stroke="#3a5a98" stroke-width="0.9"/><rect x="5.5" y="4.5" width="8" height="6" fill="#e8eef8"/><rect x="6.5" y="12.5" width="6.5" height="4.5" fill="#c8d0e0"/><path d="M9 12 L16.5 3 L18.5 4.5 L11 13.5 L8.2 14.5Z" fill="#f0a040" stroke="#a05810" stroke-width="0.7"/><path d="M16.5 3 L18.5 4.5 L19.2 3 L18 2Z" fill="#e06060"/></svg><svg style="left:885.0px;top:52.0px" width="20" height="20" viewBox="0 0 20 20"><path d="M6 2.5 H13 L14.5 9 H5Z" fill="#f4f8fc" stroke="#98a4b4" stroke-width="0.8"/><path d="M2.5 9.5 Q2.5 8 5 8 H15 Q17.5 8 17.5 9.5 V14.5 H2.5Z" fill="#e4e6ea" stroke="#8a8e96" stroke-width="0.9"/><path d="M4 13 H16 V17.5 H4Z" fill="#d0d2d8" stroke="#8a8e96" stroke-width="0.8"/><path d="M5.5 15.5 H14.5" stroke="#fff" stroke-width="1.2"/></svg><svg style="left:909.5px;top:52.0px" width="20" height="20" viewBox="0 0 20 20"><rect x="4.5" y="2.5" width="11.5" height="15" rx="1" fill="#fff" stroke="#222" stroke-width="1.5"/><path d="M6.5 6 H9 M6.5 9 H9 M6.5 12 H9 M6.5 15 H9" stroke="#222" stroke-width="1.3"/><path d="M10.5 6 H14 M10.5 12 H14" stroke="#40a0a0" stroke-width="1.6"/><path d="M10.5 9 H14" stroke="#c04090" stroke-width="1.6"/><path d="M10.5 15 H14" stroke="#888" stroke-width="1.2"/></svg><svg style="left:939.0px;top:52.0px" width="20" height="20" viewBox="0 0 20 20"><path d="M10 1.5 V18.5" stroke="#222" stroke-width="1.3"/><rect x="4.5" y="6.5" width="11" height="7.5" fill="#b4c8f4" stroke="#111" stroke-width="1.4"/></svg><svg style="left:964.5px;top:52.0px" width="20" height="20" viewBox="0 0 20 20"><rect x="3.5" y="2.5" width="13" height="15.5" fill="#fbf0c0" stroke="#222" stroke-width="1.2"/><path d="M10 1 V19" stroke="#222" stroke-width="1.2"/><rect x="6" y="4.5" width="8" height="4" fill="#a8c0f0" stroke="#3050a0" stroke-width="0.9"/><rect x="6" y="11.5" width="8" height="4" fill="#a8c0f0" stroke="#3050a0" stroke-width="0.9"/></svg><svg style="left:989.0px;top:52.0px" width="20" height="20" viewBox="0 0 20 20"><rect x="3" y="5.5" width="14" height="9.5" fill="#fff" stroke="#111" stroke-width="1.5"/><path d="M5 8.5 H15" stroke="#111" stroke-width="1.2" stroke-dasharray="1.6 1"/><path d="M5 11.5 H15" stroke="#111" stroke-width="1.4" stroke-dasharray="2.4 0.8"/></svg><svg style="left:1014.0px;top:52.0px" width="20" height="20" viewBox="0 0 20 20"><path d="M3 15 L3.5 9 L5.5 10.5 C7 5.5 13 3.5 17 7.5 C18.5 9.5 18.5 12 17.5 14 C17 10.5 14 8 10.5 9.5 C9 10.3 8.5 11.2 8.3 12.3 L10 13.8Z" fill="#d0d0d0" stroke="#b4b4b4" stroke-width="0.8"/></svg><svg style="left:1039.0px;top:52.0px" width="20" height="20" viewBox="0 0 20 20"><path d="M17 15 L16.5 9 L14.5 10.5 C13 5.5 7 3.5 3 7.5 C1.5 9.5 1.5 12 2.5 14 C3 10.5 6 8 9.5 9.5 C11 10.3 11.5 11.2 11.7 12.3 L10 13.8Z" fill="#d0d0d0" stroke="#b4b4b4" stroke-width="0.8"/></svg><svg style="left:1063.0px;top:52.0px" width="20" height="20" viewBox="0 0 20 20"><rect x="4.5" y="4.5" width="11" height="11" fill="#b4c8f4" stroke="#111" stroke-width="1.3"/><path d="M6.5 10 H13.5" stroke="#111" stroke-width="1.8"/></svg><svg style="left:1088.0px;top:52.0px" width="20" height="20" viewBox="0 0 20 20"><rect x="4.5" y="4.5" width="11" height="11" fill="#b4c8f4" stroke="#111" stroke-width="1.3"/><path d="M6.5 10 H13.5 M10 6.5 V13.5" stroke="#223" stroke-width="1.5"/></svg><svg style="left:1112.5px;top:52.0px" width="20" height="20" viewBox="0 0 20 20"><circle cx="9" cy="11" r="6.3" fill="none" stroke="#e02020" stroke-width="1.8"/><path d="M4.5 6.5 L13.5 15.5" stroke="#e02020" stroke-width="1.8"/><path d="M2.5 18 L16 4.5" stroke="#111" stroke-width="1.7"/><path d="M14.8 3.8 L18.8 1.2 L17 5.8Z" fill="#aaa" stroke="#111" stroke-width="0.8"/></svg><svg style="left:1138.0px;top:52.0px" width="20" height="20" viewBox="0 0 20 20"><path d="M4.5 2.5 H12.5 L15.5 5.5 V17.5 H4.5Z" fill="#dce4f8" stroke="#8a9cd0" stroke-width="0.9"/><path d="M6.5 9.5 C7 6.5 11 5.5 13 8 L14.2 7 L14.2 10.5 L10.8 10.2 L12 9.2 C10.8 7.5 8.5 8 8 10Z" fill="#28a838"/><path d="M13.5 11.5 C13 14.5 9 15.5 7 13 L5.8 14 L5.8 10.5 L9.2 10.8 L8 11.8 C9.2 13.5 11.5 13 12 11Z" fill="#28a838"/></svg><svg style="left:1162.5px;top:52.0px" width="20" height="20" viewBox="0 0 20 20"><path d="M4.5 2.5 H12.5 L15.5 5.5 V17.5 H4.5Z" fill="#dce4f8" stroke="#8a9cd0" stroke-width="0.9"/><path d="M7.5 8.5 L12.5 13.5 M12.5 8.5 L7.5 13.5" stroke="#e04828" stroke-width="2"/></svg><svg style="left:1192.0px;top:52.0px" width="20" height="20" viewBox="0 0 20 20"><circle cx="7.5" cy="7.5" r="5" fill="#c8ecf0" stroke="#8a8e94" stroke-width="1.8"/><circle cx="7.5" cy="7.5" r="3.2" fill="#b4e8e8" opacity="0.8"/><path d="M11.3 11.3 L16.5 16.5" stroke="#a0622c" stroke-width="2.6" stroke-linecap="round"/><rect x="5" y="6" width="5" height="3" fill="#f4e8a0" stroke="#444" stroke-width="0.7"/><path d="M7.5 1 V3 M7.5 12 V14" stroke="#444" stroke-width="1"/></svg><svg style="left:1218.0px;top:52.0px" width="20" height="20" viewBox="0 0 20 20"><circle cx="7.5" cy="7.5" r="5" fill="#c8ecf0" stroke="#8a8e94" stroke-width="1.8"/><circle cx="7.5" cy="7.5" r="3.2" fill="#b4e8e8" opacity="0.8"/><path d="M11.3 11.3 L16.5 16.5" stroke="#a0622c" stroke-width="2.6" stroke-linecap="round"/><path d="M13 4 H19 M16 1 V7" stroke="#1020c0" stroke-width="1.6"/></svg><svg style="left:1242.5px;top:52.0px" width="20" height="20" viewBox="0 0 20 20"><circle cx="7.5" cy="7.5" r="5" fill="#c8ecf0" stroke="#8a8e94" stroke-width="1.8"/><circle cx="7.5" cy="7.5" r="3.2" fill="#b4e8e8" opacity="0.8"/><path d="M11.3 11.3 L16.5 16.5" stroke="#a0622c" stroke-width="2.6" stroke-linecap="round"/><path d="M13 4 H19" stroke="#1020c0" stroke-width="1.6"/></svg><svg style="left:1267.5px;top:52.0px" width="20" height="20" viewBox="0 0 20 20"><circle cx="7.5" cy="7.5" r="5" fill="#c8ecf0" stroke="#8a8e94" stroke-width="1.8"/><circle cx="7.5" cy="7.5" r="3.2" fill="#b4e8e8" opacity="0.8"/><path d="M11.3 11.3 L16.5 16.5" stroke="#a0622c" stroke-width="2.6" stroke-linecap="round"/><path d="M13.3 7 L16 1 L18.7 7 M14.3 5 H17.7" stroke="#1020c0" stroke-width="1.4" fill="none"/></svg><svg style="left:1296.4px;top:52.0px" width="20" height="20" viewBox="0 0 20 20"><path d="M10 1.5 L11.5 4 L14 2.8 L14.3 5.6 L17.2 5.7 L16.2 8.3 L18.6 10 L16.2 11.7 L17.2 14.3 L14.3 14.4 L14 17.2 L11.5 16 L10 18.5 L8.5 16 L6 17.2 L5.7 14.4 L2.8 14.3 L3.8 11.7 L1.4 10 L3.8 8.3 L2.8 5.7 L5.7 5.6 L6 2.8 L8.5 4Z" fill="#303840"/><circle cx="10" cy="10" r="5.8" fill="#8aa8d8" stroke="#5070a8" stroke-width="0.6"/><circle cx="10" cy="10" r="1.6" fill="#e8f0ff"/><path d="M10 10 L12.5 7" stroke="#fff" stroke-width="1"/></svg><svg style="left:1322.0px;top:52.0px" width="20" height="20" viewBox="0 0 20 20"><rect x="3" y="3" width="8" height="6.5" fill="#b8c8f0" stroke="#222" stroke-width="1.2"/><rect x="6" y="6.5" width="8" height="6.5" fill="#b8c8f0" stroke="#222" stroke-width="1.2"/><rect x="9" y="10.5" width="8" height="6.5" fill="#b8c8f0" stroke="#222" stroke-width="1.2"/></svg><svg style="left:1346.4px;top:52.0px" width="20" height="20" viewBox="0 0 20 20"><rect x="3" y="3" width="8" height="6.5" fill="#b8c8f0" stroke="#222" stroke-width="1.2"/><rect x="6" y="6.5" width="8" height="6.5" fill="#b8c8f0" stroke="#222" stroke-width="1.2"/><rect x="9" y="10.5" width="8" height="6.5" fill="#b8c8f0" stroke="#222" stroke-width="1.2"/><path d="M3.5 12.5 L6.5 16 L15 6" fill="none" stroke="#58c038" stroke-width="2.2"/></svg><svg style="left:1370.6px;top:52.0px" width="20" height="20" viewBox="0 0 20 20"><path d="M10 1 V19" stroke="#1038b0" stroke-width="1.2"/><rect x="6" y="3.5" width="8" height="5" fill="#a8c0f0" stroke="#1038b0" stroke-width="1.5"/><rect x="6" y="11.5" width="8" height="5" fill="#a8c0f0" stroke="#1038b0" stroke-width="1.5"/></svg><svg style="left:1395.0px;top:52.0px" width="20" height="20" viewBox="0 0 20 20"><path d="M5 8 L10 12 L15 8 M5 1.5 V3 M15 1.5 V3 M10 17 V19" stroke="#1038b0" stroke-width="1.2" fill="none"/><rect x="1.5" y="3" width="7.5" height="5" fill="#a8c0f0" stroke="#1038b0" stroke-width="1.5"/><rect x="11" y="3" width="7.5" height="5" fill="#a8c0f0" stroke="#1038b0" stroke-width="1.5"/><rect x="6" y="12" width="8" height="5" fill="#a0e0a8" stroke="#18a030" stroke-width="1.5"/></svg><svg style="left:1420.0px;top:52.0px" width="20" height="20" viewBox="0 0 20 20"><path d="M10 8 V10.5 M5 12 V10.5 H15 V12 M10 1.5 V3 M5 17 V19 M15 17 V19" stroke="#1038b0" stroke-width="1.2" fill="none"/><rect x="6" y="3" width="8" height="5" fill="#a0e0a8" stroke="#18a030" stroke-width="1.5"/><rect x="1.5" y="12" width="7.5" height="5" fill="#a8c0f0" stroke="#1038b0" stroke-width="1.5"/><rect x="11" y="12" width="7.5" height="5" fill="#a8c0f0" stroke="#1038b0" stroke-width="1.5"/></svg><div style="left:934.3px;top:52px;width:1px;height:20px;background:#d0d0d0;"></div><div style="left:1187.3px;top:52px;width:1px;height:20px;background:#d0d0d0;"></div><div style="left:1291px;top:52px;width:1px;height:20px;background:#d0d0d0;"></div><div style="left:1445px;top:52px;width:1px;height:20px;background:#d0d0d0;"></div><div style="left:778px;top:77.5px;width:730px;height:717px;background:#fff;"></div><svg style="left:0;top:0" width="1536" height="866" viewBox="0 0 1536 866"><defs><filter id="blur1" x="-10%" y="-10%" width="120%" height="130%"><feGaussianBlur stdDeviation="1.1"/></filter></defs><rect x="982.7" y="97.2" width="248" height="40" fill="#000" opacity="0.45" filter="url(#blur1)"/><rect x="980.5" y="95" width="248" height="40" fill="#fff" stroke="#333" stroke-width="1"/><rect x="1263.2" y="372.2" width="236.5" height="238.5" fill="#000" opacity="0.45" filter="url(#blur1)"/><rect x="1261" y="370" width="236.5" height="238.5" fill="#fff" stroke="#333" stroke-width="1"/><path d="M856.4 205.5 L846.8 246.7" stroke="#000" stroke-width="1.2" fill="none"/><path d="M845.1 254.0 L844.0 246.0 L849.6 247.4 Z" stroke="#000" stroke-width="1.08" fill="#fff" stroke-linejoin="miter"/><path d="M925.9 204.0 L866.4 249.4" stroke="#000" stroke-width="1.2" fill="none"/><path d="M860.4 254.0 L864.6 247.1 L868.1 251.8 Z" stroke="#000" stroke-width="1.08" fill="#fff" stroke-linejoin="miter"/><path d="M1030.3 208.0 L872.1 258.5" stroke="#000" stroke-width="1.2" fill="none"/><path d="M865.0 260.8 L871.3 255.8 L873.0 261.3 Z" stroke="#000" stroke-width="1.08" fill="#fff" stroke-linejoin="miter"/><path d="M870.1 205.5 L888.7 246.2" stroke="#000" stroke-width="1.2" fill="none"/><path d="M891.8 253.0 L886.1 247.4 L891.4 245.0 Z" stroke="#000" stroke-width="1.08" fill="#fff" stroke-linejoin="miter"/><path d="M938.2 204.0 L911.6 246.6" stroke="#000" stroke-width="1.2" fill="none"/><path d="M907.6 253.0 L909.1 245.1 L914.0 248.2 Z" stroke="#000" stroke-width="1.08" fill="#fff" stroke-linejoin="miter"/><path d="M1044.5 208.0 L927.9 255.5" stroke="#000" stroke-width="1.2" fill="none"/><path d="M921.0 258.3 L926.9 252.8 L929.0 258.2 Z" stroke="#000" stroke-width="1.08" fill="#fff" stroke-linejoin="miter"/><path d="M896.5 205.5 L978.9 251.3" stroke="#000" stroke-width="1.2" fill="none"/><path d="M985.5 254.9 L977.5 253.8 L980.4 248.7 Z" stroke="#000" stroke-width="1.08" fill="#fff" stroke-linejoin="miter"/><path d="M962.6 204.0 L994.7 247.9" stroke="#000" stroke-width="1.2" fill="none"/><path d="M999.1 254.0 L992.3 249.6 L997.0 246.2 Z" stroke="#000" stroke-width="1.08" fill="#fff" stroke-linejoin="miter"/><path d="M1073.6 208.0 L1030.1 248.9" stroke="#000" stroke-width="1.2" fill="none"/><path d="M1024.7 254.0 L1028.2 246.8 L1032.1 251.0 Z" stroke="#000" stroke-width="1.08" fill="#fff" stroke-linejoin="miter"/><path d="M900.0 201.3 L1037.8 256.1" stroke="#000" stroke-width="1.2" fill="none"/><path d="M1044.8 258.9 L1036.7 258.8 L1038.9 253.4 Z" stroke="#000" stroke-width="1.08" fill="#fff" stroke-linejoin="miter"/><path d="M975.5 204.0 L1041.6 249.7" stroke="#000" stroke-width="1.2" fill="none"/><path d="M1047.8 254.0 L1040.0 252.1 L1043.3 247.3 Z" stroke="#000" stroke-width="1.08" fill="#fff" stroke-linejoin="miter"/><path d="M1204.9 202.0 L1098.7 253.5" stroke="#000" stroke-width="1.2" fill="none"/><path d="M1092.0 256.8 L1097.5 250.9 L1100.0 256.1 Z" stroke="#000" stroke-width="1.08" fill="#fff" stroke-linejoin="miter"/><path d="M900.0 196.1 L1139.8 259.9" stroke="#000" stroke-width="1.2" fill="none"/><path d="M1147.0 261.9 L1139.0 262.8 L1140.5 257.1 Z" stroke="#000" stroke-width="1.08" fill="#fff" stroke-linejoin="miter"/><path d="M983.5 198.6 L1140.0 256.8" stroke="#000" stroke-width="1.2" fill="none"/><path d="M1147.0 259.4 L1139.0 259.6 L1141.0 254.1 Z" stroke="#000" stroke-width="1.08" fill="#fff" stroke-linejoin="miter"/><path d="M1349.0 201.0 L1200.0 256.8" stroke="#000" stroke-width="1.2" fill="none"/><path d="M1193.0 259.4 L1199.0 254.0 L1201.0 259.5 Z" stroke="#000" stroke-width="1.08" fill="#fff" stroke-linejoin="miter"/><path d="M900.0 194.0 L1206.7 259.3" stroke="#000" stroke-width="1.2" fill="none"/><path d="M1214.0 260.8 L1206.1 262.1 L1207.3 256.4 Z" stroke="#000" stroke-width="1.08" fill="#fff" stroke-linejoin="miter"/><path d="M983.5 195.4 L1206.8 257.3" stroke="#000" stroke-width="1.2" fill="none"/><path d="M1214.0 259.3 L1206.0 260.1 L1207.5 254.5 Z" stroke="#000" stroke-width="1.08" fill="#fff" stroke-linejoin="miter"/><path d="M1356.5 202.5 L1269.1 249.4" stroke="#000" stroke-width="1.2" fill="none"/><path d="M1262.5 253.0 L1267.7 246.9 L1270.5 252.0 Z" stroke="#000" stroke-width="1.08" fill="#fff" stroke-linejoin="miter"/><path d="M948.0 344.1 L1050.6 356.2" stroke="#000" stroke-width="1.2" fill="none"/><path d="M1058.0 357.0 L1050.2 359.0 L1050.9 353.3 Z" stroke="#000" stroke-width="1.08" fill="#fff" stroke-linejoin="miter"/><path d="M948.0 342.1 L1142.0 356.8" stroke="#000" stroke-width="1.2" fill="none"/><path d="M1149.5 357.4 L1141.8 359.7 L1142.2 354.0 Z" stroke="#000" stroke-width="1.08" fill="#fff" stroke-linejoin="miter"/><path d="M921.0 278.4 L1056.2 343.7" stroke="#000" stroke-width="1.2" fill="none"/><path d="M1062.9 347.0 L1054.9 346.3 L1057.4 341.1 Z" stroke="#000" stroke-width="1.08" fill="#fff" stroke-linejoin="miter"/><path d="M1072.0 282.5 L1086.5 339.7" stroke="#000" stroke-width="1.2" fill="none"/><path d="M1088.3 347.0 L1083.7 340.4 L1089.3 339.0 Z" stroke="#000" stroke-width="1.08" fill="#fff" stroke-linejoin="miter"/><path d="M865.0 274.4 L1142.3 347.9" stroke="#000" stroke-width="1.2" fill="none"/><path d="M1149.5 349.8 L1141.5 350.7 L1143.0 345.0 Z" stroke="#000" stroke-width="1.08" fill="#fff" stroke-linejoin="miter"/><path d="M1033.5 280.5 L1155.0 342.6" stroke="#000" stroke-width="1.2" fill="none"/><path d="M1161.6 346.0 L1153.6 345.2 L1156.3 340.0 Z" stroke="#000" stroke-width="1.08" fill="#fff" stroke-linejoin="miter"/><path d="M941.0 387.0 L1050.6 400.7" stroke="#000" stroke-width="1.2" fill="none"/><path d="M1058.0 401.6 L1050.2 403.6 L1050.9 397.8 Z" stroke="#000" stroke-width="1.08" fill="#fff" stroke-linejoin="miter"/><path d="M1162.1 282.0 L1103.7 385.2" stroke="#000" stroke-width="1.2" fill="none"/><path d="M1100.0 391.8 L1101.2 383.8 L1106.2 386.7 Z" stroke="#000" stroke-width="1.08" fill="#fff" stroke-linejoin="miter"/><path d="M1233.0 280.0 L1194.4 383.7" stroke="#000" stroke-width="1.2" fill="none"/><path d="M1191.8 390.8 L1191.7 382.7 L1197.1 384.7 Z" stroke="#000" stroke-width="1.08" fill="#fff" stroke-linejoin="miter"/><path d="M940.0 495.1 L1002.5 496.1" stroke="#000" stroke-width="1.2" fill="none"/><path d="M1010.0 496.3 L1002.5 499.0 L1002.5 493.2 Z" stroke="#000" stroke-width="1.08" fill="#fff" stroke-linejoin="miter"/><path d="M946.8 519.8 L1002.7 505.9" stroke="#000" stroke-width="1.2" fill="none"/><path d="M1010.0 504.1 L1003.4 508.7 L1002.0 503.1 Z" stroke="#000" stroke-width="1.08" fill="#fff" stroke-linejoin="miter"/><path d="M920.3 562.5 L1007.1 514.6" stroke="#000" stroke-width="1.2" fill="none"/><path d="M1013.7 511.0 L1008.5 517.2 L1005.7 512.1 Z" stroke="#000" stroke-width="1.08" fill="#fff" stroke-linejoin="miter"/><path d="M906.2 604.0 L1015.9 515.7" stroke="#000" stroke-width="1.2" fill="none"/><path d="M1021.8 511.0 L1017.8 518.0 L1014.1 513.4 Z" stroke="#000" stroke-width="1.08" fill="#fff" stroke-linejoin="miter"/><path d="M904.7 645.5 L1021.5 516.6" stroke="#000" stroke-width="1.2" fill="none"/><path d="M1026.6 511.0 L1023.7 518.5 L1019.4 514.6 Z" stroke="#000" stroke-width="1.08" fill="#fff" stroke-linejoin="miter"/><path d="M898.6 727.0 L1026.9 517.4" stroke="#000" stroke-width="1.2" fill="none"/><path d="M1030.8 511.0 L1029.3 518.9 L1024.4 515.9 Z" stroke="#000" stroke-width="1.08" fill="#fff" stroke-linejoin="miter"/><path d="M988.3 728.0 L1034.7 518.3" stroke="#000" stroke-width="1.2" fill="none"/><path d="M1036.3 511.0 L1037.6 518.9 L1031.9 517.7 Z" stroke="#000" stroke-width="1.08" fill="#fff" stroke-linejoin="miter"/><path d="M1075.4 728.0 L1042.9 518.4" stroke="#000" stroke-width="1.2" fill="none"/><path d="M1041.7 511.0 L1045.7 518.0 L1040.0 518.9 Z" stroke="#000" stroke-width="1.08" fill="#fff" stroke-linejoin="miter"/><path d="M1167.8 728.0 L1051.0 517.6" stroke="#000" stroke-width="1.2" fill="none"/><path d="M1047.4 511.0 L1053.6 516.2 L1048.5 519.0 Z" stroke="#000" stroke-width="1.08" fill="#fff" stroke-linejoin="miter"/><path d="M1255.0 726.8 L1058.0 516.5" stroke="#000" stroke-width="1.2" fill="none"/><path d="M1052.9 511.0 L1060.1 514.5 L1055.9 518.5 Z" stroke="#000" stroke-width="1.08" fill="#fff" stroke-linejoin="miter"/><path d="M1083.8 420.0 L1051.5 476.0" stroke="#000" stroke-width="1.2" fill="none"/><path d="M1047.7 482.5 L1049.0 474.6 L1054.0 477.5 Z" stroke="#000" stroke-width="1.08" fill="#fff" stroke-linejoin="miter"/><path d="M1163.9 419.0 L1068.7 478.5" stroke="#000" stroke-width="1.2" fill="none"/><path d="M1062.3 482.5 L1067.1 476.1 L1070.2 481.0 Z" stroke="#000" stroke-width="1.08" fill="#fff" stroke-linejoin="miter"/><path d="M923.2 508.0 L1015.1 545.5" stroke="#000" stroke-width="1.2" fill="none"/><path d="M1022.0 548.3 L1014.0 548.2 L1016.2 542.8 Z" stroke="#000" stroke-width="1.08" fill="#fff" stroke-linejoin="miter"/><path d="M946.8 541.9 L1014.6 552.3" stroke="#000" stroke-width="1.2" fill="none"/><path d="M1022.0 553.4 L1014.1 555.2 L1015.0 549.4 Z" stroke="#000" stroke-width="1.08" fill="#fff" stroke-linejoin="miter"/><path d="M954.0 568.6 L1014.6 560.3" stroke="#000" stroke-width="1.2" fill="none"/><path d="M1022.0 559.2 L1015.0 563.1 L1014.2 557.4 Z" stroke="#000" stroke-width="1.08" fill="#fff" stroke-linejoin="miter"/><path d="M923.9 604.0 L1015.0 567.3" stroke="#000" stroke-width="1.2" fill="none"/><path d="M1022.0 564.5 L1016.1 570.0 L1014.0 564.7 Z" stroke="#000" stroke-width="1.08" fill="#fff" stroke-linejoin="miter"/><path d="M912.4 645.5 L1015.8 574.5" stroke="#000" stroke-width="1.2" fill="none"/><path d="M1022.0 570.2 L1017.5 576.9 L1014.2 572.1 Z" stroke="#000" stroke-width="1.08" fill="#fff" stroke-linejoin="miter"/><path d="M901.9 727.0 L1025.7 576.3" stroke="#000" stroke-width="1.2" fill="none"/><path d="M1030.5 570.5 L1028.0 578.1 L1023.5 574.5 Z" stroke="#000" stroke-width="1.08" fill="#fff" stroke-linejoin="miter"/><path d="M989.6 728.0 L1035.5 577.7" stroke="#000" stroke-width="1.2" fill="none"/><path d="M1037.7 570.5 L1038.3 578.5 L1032.8 576.8 Z" stroke="#000" stroke-width="1.08" fill="#fff" stroke-linejoin="miter"/><path d="M1074.8 728.0 L1046.1 577.9" stroke="#000" stroke-width="1.2" fill="none"/><path d="M1044.7 570.5 L1048.9 577.3 L1043.2 578.4 Z" stroke="#000" stroke-width="1.08" fill="#fff" stroke-linejoin="miter"/><path d="M1165.5 728.0 L1056.5 576.6" stroke="#000" stroke-width="1.2" fill="none"/><path d="M1052.1 570.5 L1058.8 574.9 L1054.1 578.3 Z" stroke="#000" stroke-width="1.08" fill="#fff" stroke-linejoin="miter"/><path d="M1250.9 726.8 L1065.0 575.2" stroke="#000" stroke-width="1.2" fill="none"/><path d="M1059.2 570.5 L1066.8 573.0 L1063.2 577.5 Z" stroke="#000" stroke-width="1.08" fill="#fff" stroke-linejoin="miter"/><path d="M1087.3 420.0 L1049.0 535.4" stroke="#000" stroke-width="1.2" fill="none"/><path d="M1046.6 542.5 L1046.3 534.5 L1051.8 536.3 Z" stroke="#000" stroke-width="1.08" fill="#fff" stroke-linejoin="miter"/><path d="M1173.0 419.0 L1060.5 537.1" stroke="#000" stroke-width="1.2" fill="none"/><path d="M1055.3 542.5 L1058.4 535.1 L1062.6 539.1 Z" stroke="#000" stroke-width="1.08" fill="#fff" stroke-linejoin="miter"/><path d="M908.8 508.0 L1022.1 588.7" stroke="#000" stroke-width="1.2" fill="none"/><path d="M1028.3 593.0 L1020.5 591.0 L1023.8 586.3 Z" stroke="#000" stroke-width="1.08" fill="#fff" stroke-linejoin="miter"/><path d="M922.6 548.0 L1020.2 593.9" stroke="#000" stroke-width="1.2" fill="none"/><path d="M1027.0 597.1 L1019.0 596.5 L1021.4 591.3 Z" stroke="#000" stroke-width="1.08" fill="#fff" stroke-linejoin="miter"/><path d="M954.0 588.4 L1019.6 601.3" stroke="#000" stroke-width="1.2" fill="none"/><path d="M1027.0 602.8 L1019.1 604.2 L1020.2 598.5 Z" stroke="#000" stroke-width="1.08" fill="#fff" stroke-linejoin="miter"/><path d="M928.5 615.4 L1019.5 608.9" stroke="#000" stroke-width="1.2" fill="none"/><path d="M1027.0 608.4 L1019.7 611.8 L1019.3 606.0 Z" stroke="#000" stroke-width="1.08" fill="#fff" stroke-linejoin="miter"/><path d="M933.6 645.5 L1019.9 616.3" stroke="#000" stroke-width="1.2" fill="none"/><path d="M1027.0 613.9 L1020.8 619.0 L1019.0 613.6 Z" stroke="#000" stroke-width="1.08" fill="#fff" stroke-linejoin="miter"/><path d="M907.3 727.0 L1025.8 625.6" stroke="#000" stroke-width="1.2" fill="none"/><path d="M1031.5 620.8 L1027.7 627.8 L1023.9 623.4 Z" stroke="#000" stroke-width="1.08" fill="#fff" stroke-linejoin="miter"/><path d="M992.0 728.0 L1038.2 627.6" stroke="#000" stroke-width="1.2" fill="none"/><path d="M1041.4 620.8 L1040.9 628.8 L1035.6 626.3 Z" stroke="#000" stroke-width="1.08" fill="#fff" stroke-linejoin="miter"/><path d="M1074.4 728.0 L1052.4 628.1" stroke="#000" stroke-width="1.2" fill="none"/><path d="M1050.8 620.8 L1055.3 627.5 L1049.6 628.7 Z" stroke="#000" stroke-width="1.08" fill="#fff" stroke-linejoin="miter"/><path d="M1162.3 728.0 L1066.0 626.2" stroke="#000" stroke-width="1.2" fill="none"/><path d="M1060.9 620.8 L1068.1 624.2 L1063.9 628.2 Z" stroke="#000" stroke-width="1.08" fill="#fff" stroke-linejoin="miter"/><path d="M1244.9 726.8 L1074.9 623.4" stroke="#000" stroke-width="1.2" fill="none"/><path d="M1068.5 619.5 L1076.4 620.9 L1073.4 625.9 Z" stroke="#000" stroke-width="1.08" fill="#fff" stroke-linejoin="miter"/><path d="M1088.9 420.0 L1052.4 585.7" stroke="#000" stroke-width="1.2" fill="none"/><path d="M1050.8 593.0 L1049.6 585.1 L1055.2 586.3 Z" stroke="#000" stroke-width="1.08" fill="#fff" stroke-linejoin="miter"/><path d="M1176.8 419.0 L1061.5 586.8" stroke="#000" stroke-width="1.2" fill="none"/><path d="M1057.3 593.0 L1059.1 585.2 L1063.9 588.5 Z" stroke="#000" stroke-width="1.08" fill="#fff" stroke-linejoin="miter"/><path d="M1434.3 152.5 V227.8 H807" fill="none" stroke="#000" stroke-width="2.6" opacity="0.33" filter="url(#blur1)"/><rect x="804" y="149.5" width="628.5" height="76.5" fill="rgb(223,213,134)" fill-opacity="0.77" stroke="#202020" stroke-opacity="0.62" stroke-width="1.3"/><g transform="translate(1422.5,150.5)"><rect x="0" y="0" width="8.5" height="8.5" fill="#1a1a1a"/><rect x="1.2" y="1.2" width="6.1" height="6.1" fill="#c0d0f0"/><rect x="1.2" y="3.6" width="6.1" height="1.4" fill="#111"/></g><path d="M1284.8 236 V297.8 H809.5" fill="none" stroke="#000" stroke-width="2.6" opacity="0.33" filter="url(#blur1)"/><rect x="806.5" y="233" width="476.5" height="63" fill="rgb(210,145,30)" fill-opacity="0.77" stroke="#202020" stroke-opacity="0.62" stroke-width="1.3"/><g transform="translate(1273,235)"><rect x="0" y="0" width="8.5" height="8.5" fill="#1a1a1a"/><rect x="1.2" y="1.2" width="6.1" height="6.1" fill="#c0d0f0"/><rect x="1.2" y="3.6" width="6.1" height="1.4" fill="#111"/></g><path d="M1006.3 305.5 V445.8 H811" fill="none" stroke="#000" stroke-width="2.6" opacity="0.33" filter="url(#blur1)"/><rect x="808" y="302.5" width="196.5" height="141.5" fill="rgb(219,159,219)" fill-opacity="0.77" stroke="#202020" stroke-opacity="0.62" stroke-width="1.3"/><g transform="translate(995,304)"><rect x="0" y="0" width="8.5" height="8.5" fill="#1a1a1a"/><rect x="1.2" y="1.2" width="6.1" height="6.1" fill="#c0d0f0"/><rect x="1.2" y="3.6" width="6.1" height="1.4" fill="#111"/></g><path d="M1251.8 318.75 V440.8 H1037.5" fill="none" stroke="#000" stroke-width="2.6" opacity="0.33" filter="url(#blur1)"/><rect x="1034.5" y="315.75" width="215.5" height="123.25" fill="rgb(167,210,177)" fill-opacity="0.77" stroke="#202020" stroke-opacity="0.62" stroke-width="1.3"/><g transform="translate(1240,317.5)"><rect x="0" y="0" width="8.5" height="8.5" fill="#1a1a1a"/><rect x="1.2" y="1.2" width="6.1" height="6.1" fill="#c0d0f0"/><rect x="1.2" y="3.6" width="6.1" height="1.4" fill="#111"/></g><path d="M968.3 458.5 V695.55 H808.5" fill="none" stroke="#000" stroke-width="2.6" opacity="0.33" filter="url(#blur1)"/><rect x="805.5" y="455.5" width="161.0" height="238.25" fill="rgb(159,159,216)" fill-opacity="0.77" stroke="#202020" stroke-opacity="0.62" stroke-width="1.3"/><g transform="translate(956,457.5)"><rect x="0" y="0" width="8.5" height="8.5" fill="#1a1a1a"/><rect x="1.2" y="1.2" width="6.1" height="6.1" fill="#c0d0f0"/><rect x="1.2" y="3.6" width="6.1" height="1.4" fill="#111"/></g><path d="M1241.3 453.75 V666.8 H987" fill="none" stroke="#000" stroke-width="2.6" opacity="0.33" filter="url(#blur1)"/><rect x="984" y="450.75" width="255.5" height="214.25" fill="rgb(219,45,136)" fill-opacity="0.77" stroke="#202020" stroke-opacity="0.62" stroke-width="1.3"/><g transform="translate(1228.75,452.5)"><rect x="0" y="0" width="8.5" height="8.5" fill="#1a1a1a"/><rect x="1.2" y="1.2" width="6.1" height="6.1" fill="#c0d0f0"/><rect x="1.2" y="3.6" width="6.1" height="1.4" fill="#111"/></g><path d="M1331.8 709.75 V770.8 H838.5" fill="none" stroke="#000" stroke-width="2.6" opacity="0.33" filter="url(#blur1)"/><rect x="835.5" y="706.75" width="494.5" height="62.25" fill="rgb(159,216,216)" fill-opacity="0.77" stroke="#202020" stroke-opacity="0.62" stroke-width="1.3"/><g transform="translate(1320,708)"><rect x="0" y="0" width="8.5" height="8.5" fill="#1a1a1a"/><rect x="1.2" y="1.2" width="6.1" height="6.1" fill="#c0d0f0"/><rect x="1.2" y="3.6" width="6.1" height="1.4" fill="#111"/></g><path d="M1091.9 375.0 L1091.9 384.3" stroke="#000" stroke-width="1.3" fill="none"/><path d="M1092.0 391.8 L1089.0 384.3 L1094.8 384.2 Z" stroke="#000" stroke-width="1.1700000000000002" fill="#e8fcff" stroke-linejoin="miter"/><path d="M1188.9 375.0 L1188.2 383.3" stroke="#000" stroke-width="1.3" fill="none"/><path d="M1187.6 390.8 L1185.3 383.0 L1191.1 383.5 Z" stroke="#000" stroke-width="1.1700000000000002" fill="#e8fcff" stroke-linejoin="miter"/><path d="M1069.0 496.0 L1096.3 495.3" stroke="#000" stroke-width="1.3" fill="none"/><path d="M1103.8 495.1 L1096.3 498.2 L1096.2 492.4 Z" stroke="#000" stroke-width="1.1700000000000002" fill="#d4e8f4" stroke-linejoin="miter"/><path d="M1069.0 505.4 L1105.8 516.1" stroke="#000" stroke-width="1.3" fill="none"/><path d="M1113.0 518.2 L1105.0 518.9 L1106.6 513.4 Z" stroke="#000" stroke-width="1.1700000000000002" fill="#d4e8f4" stroke-linejoin="miter"/><path d="M1062.0 545.6 L1125.4 511.1" stroke="#000" stroke-width="1.3" fill="none"/><path d="M1132.0 507.5 L1126.8 513.6 L1124.0 508.5 Z" stroke="#000" stroke-width="1.1700000000000002" fill="#d4e8f4" stroke-linejoin="miter"/><path d="M1062.0 559.2 L1100.1 564.5" stroke="#000" stroke-width="1.3" fill="none"/><path d="M1107.5 565.5 L1099.7 567.3 L1100.5 561.6 Z" stroke="#000" stroke-width="1.1700000000000002" fill="#d4e8f4" stroke-linejoin="miter"/><path d="M1061.2 570.5 L1139.2 627.3" stroke="#000" stroke-width="1.3" fill="none"/><path d="M1145.2 631.8 L1137.4 629.7 L1140.9 625.0 Z" stroke="#000" stroke-width="1.1700000000000002" fill="#d4e8f4" stroke-linejoin="miter"/><path d="M1068.5 593.0 L1133.1 549.9" stroke="#000" stroke-width="1.3" fill="none"/><path d="M1139.4 545.8 L1134.8 552.3 L1131.5 547.5 Z" stroke="#000" stroke-width="1.1700000000000002" fill="#d4e8f4" stroke-linejoin="miter"/><path d="M1068.5 607.2 L1101.3 607.8" stroke="#000" stroke-width="1.3" fill="none"/><path d="M1108.8 607.9 L1101.2 610.7 L1101.3 604.9 Z" stroke="#000" stroke-width="1.1700000000000002" fill="#d4e8f4" stroke-linejoin="miter"/><path d="M1068.5 613.8 L1115.4 629.4" stroke="#000" stroke-width="1.3" fill="none"/><path d="M1122.5 631.8 L1114.5 632.1 L1116.3 626.6 Z" stroke="#000" stroke-width="1.1700000000000002" fill="#d4e8f4" stroke-linejoin="miter"/><rect x="824.7" y="168.7" width="78" height="39.5" rx="6.5" fill="#000" opacity="0.42" filter="url(#blur1)"/><rect x="822" y="166" width="78" height="39.5" rx="6.5" fill="#fca57d" stroke="#4a4a4a" stroke-width="1"/><rect x="918.2" y="170.7" width="68.0" height="36" rx="6.5" fill="#000" opacity="0.42" filter="url(#blur1)"/><rect x="915.5" y="168" width="68.0" height="36" rx="6.5" fill="#fca57d" stroke="#4a4a4a" stroke-width="1"/><rect x="1010.7" y="168.7" width="176" height="42" rx="6.5" fill="#000" opacity="0.42" filter="url(#blur1)"/><rect x="1008" y="166" width="176" height="42" rx="6.5" fill="#fca57d" stroke="#4a4a4a" stroke-width="1"/><rect x="1203.2" y="175.7" width="68.5" height="29" rx="6.5" fill="#000" opacity="0.42" filter="url(#blur1)"/><rect x="1200.5" y="173" width="68.5" height="29" rx="6.5" fill="#fca57d" stroke="#4a4a4a" stroke-width="1"/><rect x="1286.7" y="174.7" width="53" height="29" rx="6.5" fill="#000" opacity="0.42" filter="url(#blur1)"/><rect x="1284" y="172" width="53" height="29" rx="6.5" fill="#fca57d" stroke="#4a4a4a" stroke-width="1"/><rect x="1351.7" y="176.7" width="68" height="28.5" rx="6.5" fill="#000" opacity="0.42" filter="url(#blur1)"/><rect x="1349" y="174" width="68" height="28.5" rx="6.5" fill="#fca57d" stroke="#4a4a4a" stroke-width="1"/><rect x="821.2" y="256.7" width="46.5" height="28.5" rx="6.5" fill="#000" opacity="0.42" filter="url(#blur1)"/><rect x="818.5" y="254" width="46.5" height="28.5" rx="6.5" fill="#ffff8a" stroke="#4a4a4a" stroke-width="1"/><rect x="878.7" y="255.7" width="45" height="29" rx="6.5" fill="#000" opacity="0.42" filter="url(#blur1)"/><rect x="876" y="253" width="45" height="29" rx="6.5" fill="#ffff8a" stroke="#4a4a4a" stroke-width="1"/><rect x="988.2" y="256.7" width="48.0" height="28.5" rx="6.5" fill="#000" opacity="0.42" filter="url(#blur1)"/><rect x="985.5" y="254" width="48.0" height="28.5" rx="6.5" fill="#ffff8a" stroke="#4a4a4a" stroke-width="1"/><rect x="1047.45" y="256.7" width="47.25" height="28.5" rx="6.5" fill="#000" opacity="0.42" filter="url(#blur1)"/><rect x="1044.75" y="254" width="47.25" height="28.5" rx="6.5" fill="#ffff8a" stroke="#4a4a4a" stroke-width="1"/><rect x="1149.7" y="256.7" width="46" height="28" rx="6.5" fill="#000" opacity="0.42" filter="url(#blur1)"/><rect x="1147" y="254" width="46" height="28" rx="6.5" fill="#ffff8a" stroke="#4a4a4a" stroke-width="1"/><rect x="1216.7" y="254.7" width="48.5" height="28" rx="6.5" fill="#000" opacity="0.42" filter="url(#blur1)"/><rect x="1214" y="252" width="48.5" height="28" rx="6.5" fill="#ffff8a" stroke="#4a4a4a" stroke-width="1"/><rect x="850.7" y="326.7" width="100" height="28.5" rx="6.5" fill="#000" opacity="0.42" filter="url(#blur1)"/><rect x="848" y="324" width="100" height="28.5" rx="6.5" fill="#a9fb80" stroke="#4a4a4a" stroke-width="1"/><rect x="856.2" y="369.7" width="87.5" height="29" rx="6.5" fill="#000" opacity="0.42" filter="url(#blur1)"/><rect x="853.5" y="367" width="87.5" height="29" rx="6.5" fill="#a9fb80" stroke="#4a4a4a" stroke-width="1"/><rect x="828.7" y="408.7" width="157" height="29.75" rx="6.5" fill="#000" opacity="0.42" filter="url(#blur1)"/><rect x="826" y="406" width="157" height="29.75" rx="6.5" fill="#a9fb80" stroke="#d43424" stroke-width="1.5" stroke-dasharray="5.5 2"/><rect x="1060.7" y="349.7" width="67.75" height="28" rx="6.5" fill="#000" opacity="0.42" filter="url(#blur1)"/><rect x="1058" y="347" width="67.75" height="28" rx="6.5" fill="#a9f5fd" stroke="#4a4a4a" stroke-width="1"/><rect x="1152.2" y="348.7" width="81.0" height="29" rx="6.5" fill="#000" opacity="0.42" filter="url(#blur1)"/><rect x="1149.5" y="346" width="81.0" height="29" rx="6.5" fill="#a9f5fd" stroke="#4a4a4a" stroke-width="1"/><rect x="1060.7" y="394.45" width="68" height="28.25" rx="6.5" fill="#000" opacity="0.42" filter="url(#blur1)"/><rect x="1058" y="391.75" width="68" height="28.25" rx="6.5" fill="#a9f5fd" stroke="#4a4a4a" stroke-width="1"/><rect x="1157.7" y="393.45" width="63" height="28.25" rx="6.5" fill="#000" opacity="0.42" filter="url(#blur1)"/><rect x="1155" y="390.75" width="63" height="28.25" rx="6.5" fill="#a9f5fd" stroke="#4a4a4a" stroke-width="1"/><rect x="841.7" y="483.2" width="101" height="27.5" rx="6.5" fill="#000" opacity="0.42" filter="url(#blur1)"/><rect x="839" y="480.5" width="101" height="27.5" rx="6.5" fill="#d9d9d9" stroke="#4a4a4a" stroke-width="1"/><rect x="839.45" y="521.7" width="110.0" height="29" rx="6.5" fill="#000" opacity="0.42" filter="url(#blur1)"/><rect x="836.75" y="519" width="110.0" height="29" rx="6.5" fill="#d9d9d9" stroke="#4a4a4a" stroke-width="1"/><rect x="837.7" y="565.2" width="119" height="28.5" rx="6.5" fill="#000" opacity="0.42" filter="url(#blur1)"/><rect x="835" y="562.5" width="119" height="28.5" rx="6.5" fill="#d9d9d9" stroke="#4a4a4a" stroke-width="1"/><rect x="851.2" y="606.7" width="80.0" height="28.5" rx="6.5" fill="#000" opacity="0.42" filter="url(#blur1)"/><rect x="848.5" y="604" width="80.0" height="28.5" rx="6.5" fill="#d9d9d9" stroke="#4a4a4a" stroke-width="1"/><rect x="852.45" y="648.2" width="84.25" height="28.25" rx="6.5" fill="#000" opacity="0.42" filter="url(#blur1)"/><rect x="849.75" y="645.5" width="84.25" height="28.25" rx="6.5" fill="#d9d9d9" stroke="#4a4a4a" stroke-width="1"/><rect x="1012.7" y="485.2" width="59" height="28.5" rx="6.5" fill="#000" opacity="0.42" filter="url(#blur1)"/><rect x="1010" y="482.5" width="59" height="28.5" rx="6.5" fill="#add5e9" stroke="#4a4a4a" stroke-width="1"/><rect x="1024.7" y="545.2" width="40" height="28.0" rx="6.5" fill="#000" opacity="0.42" filter="url(#blur1)"/><rect x="1022" y="542.5" width="40" height="28.0" rx="6.5" fill="#add5e9" stroke="#4a4a4a" stroke-width="1"/><rect x="1029.7" y="595.7" width="41.5" height="27.75" rx="6.5" fill="#000" opacity="0.42" filter="url(#blur1)"/><rect x="1027" y="593" width="41.5" height="27.75" rx="6.5" fill="#add5e9" stroke="#4a4a4a" stroke-width="1"/><rect x="1106.45" y="482.7" width="107.0" height="27.5" rx="6.5" fill="#000" opacity="0.42" filter="url(#blur1)"/><rect x="1103.75" y="480" width="107.0" height="27.5" rx="6.5" fill="#add5e9" stroke="#4a4a4a" stroke-width="1"/><rect x="1110.2" y="520.95" width="105.0" height="27.5" rx="6.5" fill="#000" opacity="0.42" filter="url(#blur1)"/><rect x="1107.5" y="518.25" width="105.0" height="27.5" rx="6.5" fill="#add5e9" stroke="#4a4a4a" stroke-width="1"/><rect x="1110.2" y="561.95" width="105.75" height="27.0" rx="6.5" fill="#000" opacity="0.42" filter="url(#blur1)"/><rect x="1107.5" y="559.25" width="105.75" height="27.0" rx="6.5" fill="#add5e9" stroke="#4a4a4a" stroke-width="1"/><rect x="1111.45" y="597.7" width="105.5" height="27.5" rx="6.5" fill="#000" opacity="0.42" filter="url(#blur1)"/><rect x="1108.75" y="595" width="105.5" height="27.5" rx="6.5" fill="#add5e9" stroke="#4a4a4a" stroke-width="1"/><rect x="1114.45" y="634.45" width="105.0" height="27.75" rx="6.5" fill="#000" opacity="0.42" filter="url(#blur1)"/><rect x="1111.75" y="631.75" width="105.0" height="27.75" rx="6.5" fill="#add5e9" stroke="#4a4a4a" stroke-width="1"/><rect x="847.45" y="729.7" width="88.75" height="31" rx="6.5" fill="#000" opacity="0.42" filter="url(#blur1)"/><rect x="844.75" y="727" width="88.75" height="31" rx="6.5" fill="#55f985" stroke="#4a4a4a" stroke-width="1"/><rect x="946.95" y="730.7" width="81.25" height="30.75" rx="6.5" fill="#000" opacity="0.42" filter="url(#blur1)"/><rect x="944.25" y="728" width="81.25" height="30.75" rx="6.5" fill="#55f985" stroke="#4a4a4a" stroke-width="1"/><rect x="1033.7" y="730.7" width="93.25" height="29" rx="6.5" fill="#000" opacity="0.42" filter="url(#blur1)"/><rect x="1031" y="728" width="93.25" height="29" rx="6.5" fill="#55f985" stroke="#4a4a4a" stroke-width="1"/><rect x="1135.2" y="730.7" width="86.25" height="28.25" rx="6.5" fill="#000" opacity="0.42" filter="url(#blur1)"/><rect x="1132.5" y="728" width="86.25" height="28.25" rx="6.5" fill="#55f985" stroke="#4a4a4a" stroke-width="1"/><rect x="1235.2" y="729.45" width="72.0" height="28.75" rx="6.5" fill="#000" opacity="0.42" filter="url(#blur1)"/><rect x="1232.5" y="726.75" width="72.0" height="28.75" rx="6.5" fill="#55f985" stroke="#4a4a4a" stroke-width="1"/><path d="M983.0 414.6 L1050.5 409.2" stroke="#000" stroke-width="1.3" fill="none"/><path d="M1058.0 408.6 L1050.8 412.1 L1050.3 406.3 Z" stroke="#000" stroke-width="1.1700000000000002" fill="#a8f080" stroke-linejoin="miter"/><path d="M983.0 416.4 L1147.5 407.1" stroke="#000" stroke-width="1.3" fill="none"/><path d="M1155.0 406.7 L1147.7 410.0 L1147.3 404.2 Z" stroke="#000" stroke-width="1.1700000000000002" fill="#a8f080" stroke-linejoin="miter"/></svg><span style="left:1096.2px;top:155.0px;font-size:7.8px;line-height:10px;letter-spacing:-0.091px;color:#202020;">Input Values</span><span style="left:1002.6px;top:238.5px;font-size:7.8px;line-height:10px;letter-spacing:-0.091px;color:#202020;">Brine-Oil-Gas Properties</span><span style="left:884.5px;top:308.0px;font-size:7.8px;line-height:10px;letter-spacing:-0.094px;color:#202020;">Sw Brie Flag</span><span style="left:1066.6px;top:321.5px;font-size:7.8px;line-height:10px;letter-spacing:-0.097px;color:#202020;">Hydrocarbon and Combined Fluid Properties</span><span style="left:835.1px;top:461.5px;font-size:7.8px;line-height:10px;letter-spacing:-0.088px;color:#202020;">Clays, Porosity. Aspect Ratios</span><span style="left:1082.3px;top:456.2px;font-size:7.8px;line-height:10px;letter-spacing:-0.094px;color:#202020;">Modeled Elastics</span><span style="left:1071.8px;top:712.2px;font-size:7.8px;line-height:10px;letter-spacing:-0.098px;color:#202020;">Moduli</span><span style="left:856.8px;top:168.7px;font-size:7.8px;line-height:10px;letter-spacing:-0.111px;color:#111;">n3</span><span style="left:835.8px;top:181.7px;font-size:7.8px;line-height:10px;letter-spacing:-0.073px;color:#111;">Pressure in psi</span><span style="left:837.6px;top:191.2px;font-size:7.8px;line-height:10px;letter-spacing:-0.123px;color:#111;">(PRESSURE)</span><span style="left:945.3px;top:170.7px;font-size:7.8px;line-height:10px;letter-spacing:-0.111px;color:#111;">n4</span><span style="left:924.2px;top:183.7px;font-size:7.8px;line-height:10px;letter-spacing:-0.095px;color:#111;">Temperature in</span><span style="left:934.9px;top:193.2px;font-size:7.8px;line-height:10px;letter-spacing:-0.096px;color:#111;">degF (T)</span><span style="left:1089.7px;top:168.7px;font-size:7.8px;line-height:10px;letter-spacing:-0.111px;color:#111;">n33</span><span style="left:1014.7px;top:181.7px;font-size:7.8px;line-height:10px;letter-spacing:-0.095px;color:#111;">Gas Specific Gravity (GASSPGR) density of gas</span><span style="left:1056.9px;top:191.2px;font-size:7.8px;line-height:10px;letter-spacing:-0.093px;color:#111;">compared to air at STP</span><span style="left:1228.4px;top:175.0px;font-size:7.8px;line-height:10px;letter-spacing:-0.111px;color:#111;">n34</span><span style="left:1207.7px;top:188.1px;font-size:7.8px;line-height:10px;letter-spacing:-0.102px;color:#111;">GOR (CuFt/Bbl)</span><span style="left:1304.2px;top:174.0px;font-size:7.8px;line-height:10px;letter-spacing:-0.111px;color:#111;">n32</span><span style="left:1294.7px;top:187.1px;font-size:7.8px;line-height:10px;letter-spacing:-0.093px;color:#111;">API (API)</span><span style="left:1376.7px;top:176.0px;font-size:7.8px;line-height:10px;letter-spacing:-0.111px;color:#111;">n31</span><span style="left:1356.2px;top:189.1px;font-size:7.8px;line-height:10px;letter-spacing:-0.088px;color:#111;">Salinity (SALIN)</span><span style="left:835.7px;top:256.0px;font-size:7.8px;line-height:10px;letter-spacing:-0.106px;color:#111;">n11</span><span style="left:824.9px;top:269.1px;font-size:7.8px;line-height:10px;letter-spacing:-0.200px;color:#111;">Rho - Gas</span><span style="left:892.2px;top:255.0px;font-size:7.8px;line-height:10px;letter-spacing:-0.111px;color:#111;">n12</span><span style="left:885.6px;top:268.1px;font-size:7.8px;line-height:10px;letter-spacing:-0.097px;color:#111;">K - Gas</span><span style="left:1003.2px;top:256.0px;font-size:7.8px;line-height:10px;letter-spacing:-0.111px;color:#111;">n13</span><span style="left:994.5px;top:269.1px;font-size:7.8px;line-height:10px;letter-spacing:-0.088px;color:#111;">Rho - Oil</span><span style="left:1062.0px;top:256.0px;font-size:7.8px;line-height:10px;letter-spacing:-0.111px;color:#111;">n48</span><span style="left:1057.8px;top:269.1px;font-size:7.8px;line-height:10px;letter-spacing:-0.079px;color:#111;">K - Oil</span><span style="left:1163.7px;top:256.0px;font-size:7.8px;line-height:10px;letter-spacing:-0.111px;color:#111;">n10</span><span style="left:1155.2px;top:269.1px;font-size:7.8px;line-height:10px;letter-spacing:-0.086px;color:#111;">K - Brine</span><span style="left:1234.0px;top:254.0px;font-size:7.8px;line-height:10px;letter-spacing:-0.111px;color:#111;">n9</span><span style="left:1219.0px;top:267.1px;font-size:7.8px;line-height:10px;letter-spacing:-0.092px;color:#111;">Rho - Brine</span><span style="left:891.7px;top:326.0px;font-size:7.8px;line-height:10px;letter-spacing:-0.111px;color:#111;">n35</span><span style="left:859.9px;top:339.1px;font-size:7.8px;line-height:10px;letter-spacing:-0.187px;color:#111;">Gas/Oil Flag (HINDEX)</span><span style="left:890.9px;top:369.0px;font-size:7.8px;line-height:10px;letter-spacing:-0.111px;color:#111;">n36</span><span style="left:860.9px;top:382.1px;font-size:7.8px;line-height:10px;letter-spacing:-0.096px;color:#111;">Brie Exponent (BRIE)</span><span style="left:900.3px;top:408.0px;font-size:7.8px;line-height:10px;letter-spacing:-0.111px;color:#111;">n0</span><span style="left:832.2px;top:421.1px;font-size:7.8px;line-height:10px;letter-spacing:0.109px;color:#111;">Water Saturation (Swt) wrt Total Porosity</span><span style="left:1085.5px;top:349.0px;font-size:7.8px;line-height:10px;letter-spacing:-0.111px;color:#111;">n15</span><span style="left:1064.2px;top:362.1px;font-size:7.8px;line-height:10px;letter-spacing:-0.097px;color:#111;">K - Hydrocarbon</span><span style="left:1183.7px;top:348.0px;font-size:7.8px;line-height:10px;letter-spacing:-0.111px;color:#111;">n16</span><span style="left:1157.9px;top:361.1px;font-size:7.8px;line-height:10px;letter-spacing:-0.099px;color:#111;">Rho - Hydrocarbon</span><span style="left:1085.7px;top:393.8px;font-size:7.8px;line-height:10px;letter-spacing:-0.111px;color:#111;">n50</span><span style="left:1078.1px;top:406.9px;font-size:7.8px;line-height:10px;letter-spacing:-0.092px;color:#111;">K_ Fluid</span><span style="left:1180.2px;top:392.8px;font-size:7.8px;line-height:10px;letter-spacing:-0.111px;color:#111;">n49</span><span style="left:1167.9px;top:405.9px;font-size:7.8px;line-height:10px;letter-spacing:-0.089px;color:#111;">Rho - Fluid</span><span style="left:885.3px;top:482.5px;font-size:7.8px;line-height:10px;letter-spacing:-0.111px;color:#111;">n2</span><span style="left:856.1px;top:495.6px;font-size:7.8px;line-height:10px;letter-spacing:-0.092px;color:#111;">Clay Fraction (VCL)</span><span style="left:885.4px;top:521.0px;font-size:7.8px;line-height:10px;letter-spacing:-0.111px;color:#111;">n37</span><span style="left:843.4px;top:534.1px;font-size:7.8px;line-height:10px;letter-spacing:-0.098px;color:#111;">Grain Aspect Ratio (GR_AR)</span><span style="left:888.2px;top:564.5px;font-size:7.8px;line-height:10px;letter-spacing:-0.111px;color:#111;">n38</span><span style="left:841.1px;top:577.6px;font-size:7.8px;line-height:10px;letter-spacing:-0.097px;color:#111;">Dry Clay Aspect Ratio (DC_AR)</span><span style="left:882.2px;top:606.0px;font-size:7.8px;line-height:10px;letter-spacing:-0.111px;color:#111;">n39</span><span style="left:867.2px;top:619.1px;font-size:7.8px;line-height:10px;letter-spacing:-0.094px;color:#111;">Clay Density</span><span style="left:887.6px;top:647.5px;font-size:7.8px;line-height:10px;letter-spacing:-0.111px;color:#111;">n1</span><span style="left:869.1px;top:660.6px;font-size:7.8px;line-height:10px;letter-spacing:-0.086px;color:#111;">Total Porosity</span><span style="left:1032.2px;top:482.9px;font-size:8.2px;line-height:11px;letter-spacing:0.172px;color:#111;font-weight:bold;">n23</span><span style="left:1012.1px;top:496.3px;font-size:8.2px;line-height:11px;letter-spacing:0.138px;color:#111;font-weight:bold;">Density - calc</span><span style="left:1034.7px;top:542.9px;font-size:8.2px;line-height:11px;letter-spacing:0.172px;color:#111;font-weight:bold;">n24</span><span style="left:1024.5px;top:556.3px;font-size:8.2px;line-height:11px;letter-spacing:0.137px;color:#111;font-weight:bold;">Vp - calc</span><span style="left:1040.4px;top:593.4px;font-size:8.2px;line-height:11px;letter-spacing:0.172px;color:#111;font-weight:bold;">n25</span><span style="left:1030.5px;top:606.8px;font-size:8.2px;line-height:11px;letter-spacing:0.135px;color:#111;font-weight:bold;">Vs - calc</span><span style="left:1149.9px;top:480.4px;font-size:8.2px;line-height:11px;letter-spacing:0.172px;color:#111;font-weight:bold;">n26</span><span style="left:1118.7px;top:493.8px;font-size:8.2px;line-height:11px;letter-spacing:0.151px;color:#111;font-weight:bold;">P-Impedance - calc</span><span style="left:1152.7px;top:518.6px;font-size:8.2px;line-height:11px;letter-spacing:0.172px;color:#111;font-weight:bold;">n27</span><span style="left:1121.5px;top:532.0px;font-size:8.2px;line-height:11px;letter-spacing:0.151px;color:#111;font-weight:bold;">S-Impedance - calc</span><span style="left:1153.1px;top:559.6px;font-size:8.2px;line-height:11px;letter-spacing:0.172px;color:#111;font-weight:bold;">n28</span><span style="left:1132.5px;top:573.0px;font-size:8.2px;line-height:11px;letter-spacing:0.141px;color:#111;font-weight:bold;">P-Sonic - calc</span><span style="left:1154.2px;top:595.4px;font-size:8.2px;line-height:11px;letter-spacing:0.172px;color:#111;font-weight:bold;">n29</span><span style="left:1133.6px;top:608.8px;font-size:8.2px;line-height:11px;letter-spacing:0.141px;color:#111;font-weight:bold;">S-Sonic - calc</span><span style="left:1156.9px;top:632.1px;font-size:8.2px;line-height:11px;letter-spacing:0.172px;color:#111;font-weight:bold;">n30</span><span style="left:1138.0px;top:645.5px;font-size:8.2px;line-height:11px;letter-spacing:0.132px;color:#111;font-weight:bold;">Vp / Vs - calc</span><span style="left:882.8px;top:729.0px;font-size:7.8px;line-height:10px;letter-spacing:-0.111px;color:#111;">n41</span><span style="left:855.6px;top:742.1px;font-size:7.8px;line-height:10px;letter-spacing:-0.180px;color:#111;">Clay Shear Modulus</span><span style="left:978.5px;top:730.0px;font-size:7.8px;line-height:10px;letter-spacing:-0.111px;color:#111;">n42</span><span style="left:953.4px;top:743.1px;font-size:7.8px;line-height:10px;letter-spacing:-0.097px;color:#111;">Clay Bulk Modulus</span><span style="left:1071.3px;top:730.0px;font-size:7.8px;line-height:10px;letter-spacing:-0.111px;color:#111;">n43</span><span style="left:1039.6px;top:743.1px;font-size:7.8px;line-height:10px;letter-spacing:-0.100px;color:#111;">Quartz Shear Modulus</span><span style="left:1169.3px;top:730.0px;font-size:7.8px;line-height:10px;letter-spacing:-0.111px;color:#111;">n44</span><span style="left:1140.4px;top:743.1px;font-size:7.8px;line-height:10px;letter-spacing:-0.098px;color:#111;">Quartz Bulk Modulus</span><span style="left:1262.2px;top:728.8px;font-size:7.8px;line-height:10px;letter-spacing:-0.111px;color:#111;">n45</span><span style="left:1243.4px;top:741.9px;font-size:7.8px;line-height:10px;letter-spacing:-0.094px;color:#111;">Quartz Density</span><span style="left:983.5px;top:96.5px;font-size:17.5px;line-height:22px;letter-spacing:0.019px;text-decoration:underline;text-decoration-thickness:1.2px;text-underline-offset:2px;">Starting Point Workflow</span><span style="left:983.5px;top:118.7px;font-size:9.5px;line-height:12px;letter-spacing:-0.093px;color:#111;">Revised: March 2023</span><span style="left:1263.5px;top:372.5px;font-size:9.5px;line-height:12px;letter-spacing:-0.008px;font-weight:bold;text-decoration:underline;">Input Curves Used in Workflow</span><span style="left:1263.5px;top:384.6px;font-size:9.5px;line-height:12px;letter-spacing:-0.110px;color:#111;">n0 - SWT (none)</span><span style="left:1263.5px;top:396.1px;font-size:9.5px;line-height:12px;letter-spacing:-0.104px;color:#111;">n1 - PHIT (none)[Total porosity]</span><span style="left:1263.5px;top:407.6px;font-size:9.5px;line-height:12px;letter-spacing:-0.077px;color:#111;">n2 - VCL (none)[Dry clay fraction]</span><span style="left:1263.5px;top:419.1px;font-size:9.5px;line-height:12px;letter-spacing:-0.041px;color:#111;">n3 - PRESSURE (psi)</span><span style="left:1263.5px;top:430.6px;font-size:9.5px;line-height:12px;letter-spacing:-0.130px;color:#111;">n4 - T (degF)</span><span style="left:1263.5px;top:442.2px;font-size:9.5px;line-height:12px;letter-spacing:-0.061px;color:#111;">n5 - RHOC (g/cc)</span><span style="left:1263.5px;top:453.7px;font-size:9.5px;line-height:12px;letter-spacing:-0.105px;color:#111;">n6 - DTC (usec/ft)</span><span style="left:1263.5px;top:465.2px;font-size:9.5px;line-height:12px;letter-spacing:0.051px;color:#111;">n7 - VP (ft/sec)</span><span style="left:1263.5px;top:476.7px;font-size:9.5px;line-height:12px;letter-spacing:0.041px;color:#111;">n8 - VS (ft/sec)</span><span style="left:1263.5px;top:488.2px;font-size:9.5px;line-height:12px;letter-spacing:-0.100px;color:#111;">n31 - SALIN (ppm)</span><span style="left:1263.5px;top:499.7px;font-size:9.5px;line-height:12px;letter-spacing:-0.124px;color:#111;">n32 - API (none)</span><span style="left:1263.5px;top:511.2px;font-size:9.5px;line-height:12px;letter-spacing:-0.069px;color:#111;">n33 - GASSPGR (none)</span><span style="left:1263.5px;top:522.7px;font-size:9.5px;line-height:12px;letter-spacing:-0.073px;color:#111;">n34 - GOR (CuFt/Bbl)</span><span style="left:1263.5px;top:534.2px;font-size:9.5px;line-height:12px;letter-spacing:-0.124px;color:#111;">n35 - HINDEX  [gas-oil flag, gas-0]</span><span style="left:1263.5px;top:545.7px;font-size:9.5px;line-height:12px;letter-spacing:-0.072px;color:#111;">n36 - BRIE (none)  [Brie patchy saturation exponent]</span><span style="left:1263.5px;top:557.2px;font-size:9.5px;line-height:12px;letter-spacing:-0.076px;color:#111;">n37 - GR_AR [grain aspect ratio]</span><span style="left:1263.5px;top:568.8px;font-size:9.5px;line-height:12px;letter-spacing:-0.043px;color:#111;">n38 - DC_AR [dry clay aspect ratio]</span><span style="left:1263.5px;top:580.3px;font-size:9.5px;line-height:12px;letter-spacing:-0.050px;color:#111;">n39 - CALY_RHO [clay density]</span><span style="left:1263.5px;top:591.8px;font-size:9.5px;line-height:12px;letter-spacing:-0.066px;color:#111;">n40 - DTS (usec/ft)</span><div style="left:775px;top:76px;width:3px;height:764px;background:linear-gradient(90deg,#6c7284,#8e909c 60%,#b4b4bc);"></div><div style="left:775.5px;top:8px;width:1px;height:68px;background:#9cc4e8;"></div><div style="left:772.5px;top:660px;width:2.5px;height:180px;background:#a6c6e2;"></div><div style="left:1508px;top:77.5px;width:13.5px;height:717px;background:#f0f0f0;"></div><div style="left:1508px;top:131px;width:13.5px;height:286px;background:#cdcdcd;"></div><svg style="left:1510.5px;top:82.5px" width="8" height="5" viewBox="0 0 8 5"><path d="M0.7 4.3 L4 1 L7.3 4.3" fill="none" stroke="#505050" stroke-width="1.3"/></svg><svg style="left:1510.5px;top:783px" width="8" height="5" viewBox="0 0 8 5"><path d="M0.7 0.7 L4 4 L7.3 0.7" fill="none" stroke="#505050" stroke-width="1.3"/></svg><div style="left:778px;top:794.5px;width:730px;height:13px;background:#f0f0f0;"></div><div style="left:792px;top:794.5px;width:221px;height:13px;background:#cdcdcd;"></div><svg style="left:782px;top:797px" width="5" height="8" viewBox="0 0 5 8"><path d="M4.3 0.7 L1 4 L4.3 7.3" fill="none" stroke="#404040" stroke-width="1.4"/></svg><svg style="left:1498px;top:797px" width="5" height="8" viewBox="0 0 5 8"><path d="M0.7 0.7 L4 4 L0.7 7.3" fill="none" stroke="#404040" stroke-width="1.4"/></svg><div style="left:1508px;top:794.5px;width:13.5px;height:13px;background:#f0f0f0;"></div><div style="left:778px;top:807.3px;width:744px;height:1px;background:#8c8c8c;"></div><div style="left:778px;top:808.5px;width:744px;height:30.5px;background:#f5f5f5;"></div><div style="left:1210.5px;top:811.5px;width:102.5px;height:28px;background:#f3f3f3;border:1px solid #d4d4d4;border-top-color:#b4b4b4;border-left-color:#b4b4b4;border-bottom:none;box-sizing:border-box;"></div><div style="left:1317.5px;top:811.5px;width:102.0px;height:28px;background:#f3f3f3;border:1px solid #d4d4d4;border-top-color:#b4b4b4;border-left-color:#b4b4b4;border-bottom:none;box-sizing:border-box;"></div><div style="left:1424.5px;top:811.5px;width:25.5px;height:28px;background:#f3f3f3;border:1px solid #d4d4d4;border-top-color:#b4b4b4;border-left-color:#b4b4b4;border-bottom:none;box-sizing:border-box;"></div><div style="left:1455px;top:811.5px;width:51px;height:28px;background:#f3f3f3;border:1px solid #d4d4d4;border-top-color:#b4b4b4;border-left-color:#b4b4b4;border-bottom:none;box-sizing:border-box;"></div><span style="left:1217.5px;top:812.2px;font-size:9.7px;line-height:13px;letter-spacing:-0.291px;color:#111;">Ranch Blanco State 5</span><span style="left:1335.0px;top:812.2px;font-size:9.7px;line-height:13px;letter-spacing:0.019px;color:#111;">WorkingInterval</span><div style="left:1517px;top:834px;width:1.3px;height:1.3px;background:#a8a8a8;"></div><div style="left:1514px;top:834px;width:1.3px;height:1.3px;background:#a8a8a8;"></div><div style="left:1517px;top:831px;width:1.3px;height:1.3px;background:#a8a8a8;"></div><div style="left:1511px;top:834px;width:1.3px;height:1.3px;background:#a8a8a8;"></div><div style="left:1514px;top:831px;width:1.3px;height:1.3px;background:#a8a8a8;"></div><div style="left:1517px;top:828px;width:1.3px;height:1.3px;background:#a8a8a8;"></div><div style="left:776px;top:839px;width:747px;height:1.5px;background:#5a5a5a;"></div><span style="left:799.5px;top:800px;font-size:24px;line-height:28px;font-weight:bold;color:#36a5f0;transform:scaleX(0.825);transform-origin:0 0;letter-spacing:-0.2px;-webkit-text-stroke:1.5px #36a5f0;">AstroCrack.com</span><div style="left:773px;top:840.5px;width:763px;height:25.5px;background:linear-gradient(#f1f2f6 0,#f1f2f6 19px,#d4def4 21px,#e6eefc 25px);"></div><div style="left:773px;top:840.5px;width:3px;height:23px;background:#dfe3ec;"></div><span style="left:782.5px;top:843.5px;font-size:9.7px;line-height:13px;letter-spacing:-0.370px;color:#111;">Depth 16277.25 ;</span><div style="left:856.5px;top:843px;width:1px;height:15px;background:#c0c0c8;"></div><span style="left:862.8px;top:843.5px;font-size:9.7px;line-height:13px;letter-spacing:-0.367px;color:#111;">PW = 15.20" ;  SW = 8.95"</span><div style="left:971px;top:843px;width:1px;height:15px;background:#c0c0c8;"></div><span style="left:975.5px;top:843.5px;font-size:9.7px;line-height:13px;letter-spacing:-0.569px;color:#111;">DT 77.490</span><div style="left:1529px;top:858px;width:1.4px;height:1.4px;background:#a0a4b0;"></div><div style="left:1526px;top:858px;width:1.4px;height:1.4px;background:#a0a4b0;"></div><div style="left:1529px;top:855px;width:1.4px;height:1.4px;background:#a0a4b0;"></div><div style="left:1523px;top:858px;width:1.4px;height:1.4px;background:#a0a4b0;"></div><div style="left:1526px;top:855px;width:1.4px;height:1.4px;background:#a0a4b0;"></div><div style="left:1529px;top:852px;width:1.4px;height:1.4px;background:#a0a4b0;"></div><div style="left:1516px;top:843px;width:1px;height:18px;background:#d0d0d8;"></div><svg style="left:316px;top:369px" width="11" height="17" viewBox="0 0 11 17"><path d="M0.7 0.7 V13 L3.6 10.4 L5.8 15.6 L7.6 14.8 L5.4 9.8 H9.4Z" fill="#fff" stroke="#222" stroke-width="0.9"/></svg></body></html>
